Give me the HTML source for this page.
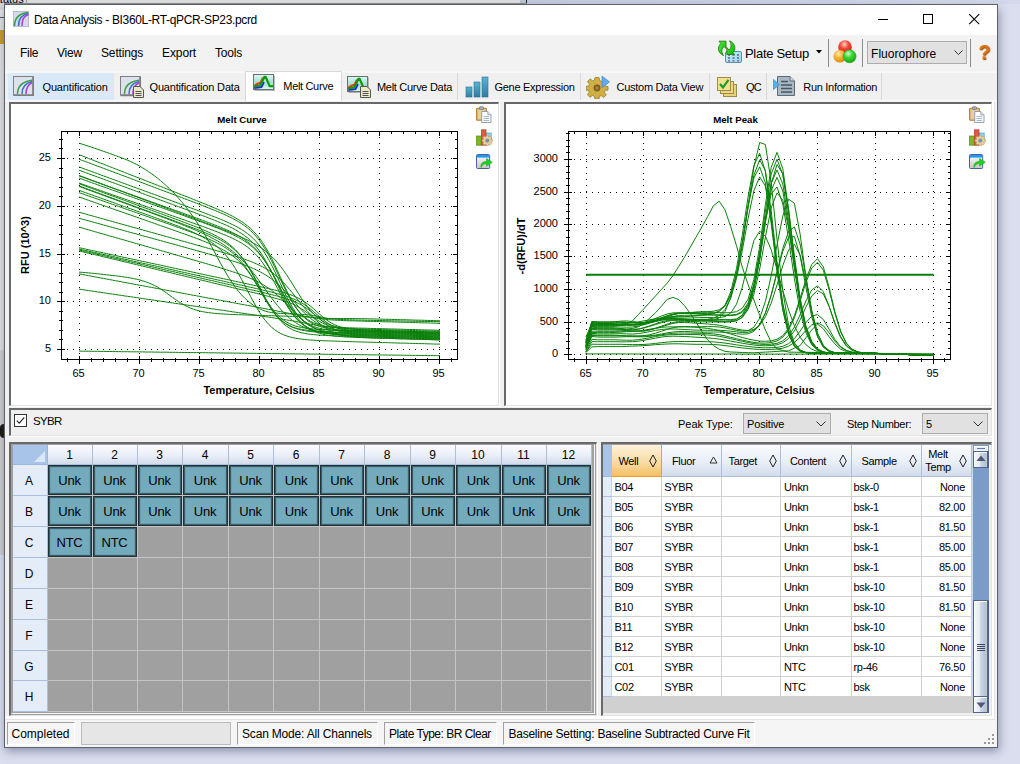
<!DOCTYPE html>
<html><head><meta charset="utf-8"><title>Data Analysis</title>
<style>
*{box-sizing:border-box;margin:0;padding:0}
html,body{width:1020px;height:764px;overflow:hidden}
body{position:relative;background:#dadeee;font-family:"Liberation Sans",sans-serif;font-size:12px;color:#000}
.a{position:absolute}
.t{position:absolute;white-space:pre;line-height:14px;height:14px}
#win{position:absolute;left:4px;top:4px;width:994px;height:744px;background:#f0f0f0;border:1px solid #5f6168;box-shadow:0 0 0 0 #000}
.sunk{position:absolute;border-style:solid;border-width:2px 1px 1px 2px;border-color:#696969 #e3e3e3 #e3e3e3 #696969;background:#fff}
.sunk:after{content:"";position:absolute;left:-2px;top:-2px;right:-2px;bottom:-2px;border-style:solid;border-width:0 1px 1px 0;border-color:#fff}
.tab{position:absolute;top:73px;height:27px;background:#f0f0f0;border-right:1px solid #dadada}
.tabt{position:absolute;font-size:11px;top:80.3px;line-height:14px;white-space:pre;letter-spacing:-0.15px}
.combo{position:absolute;background:#e1e1e1;border:1px solid #adadad}
.sb{position:absolute;top:722px;height:23px;border-style:solid;border-width:1px;border-color:#a0a0a0 #fff #fff #a0a0a0}
.sbt{position:absolute;top:727px;font-size:12px;line-height:14px;white-space:pre}
</style></head><body>

<!-- desktop background strips -->
<div class="a" style="left:0;top:0;width:520px;height:4px;background:#dedede"></div>
<div class="a" style="left:520px;top:0;width:6px;height:4px;background:#b7c6d8"></div>
<div class="a" style="left:526px;top:0;width:1px;height:4px;background:#222"></div>
<div class="a" style="left:527px;top:0;width:493px;height:4px;background:linear-gradient(90deg,#c4c9de,#d4d8ea)"></div>
<div class="a" style="left:0;top:3px;width:527px;height:1px;background:#8a8a8a"></div>
<div class="a" style="left:0;top:0;width:4px;height:555px;background:#e2e2e2"></div>
<div class="a" style="left:0;top:0;width:4px;height:10px;background:#d4d4d4"></div>
<div class="a" style="left:0;top:17px;width:4px;height:1px;background:#555"></div>
<div class="a" style="left:0;top:30px;width:4px;height:14px;background:#c79a1e"></div>
<div class="a" style="left:0;top:350px;width:4px;height:205px;background:#cfcfcf"></div>
<div class="a" style="left:0;top:424px;width:4px;height:14px;background:#151008;border-radius:4px 0 0 4px"></div>
<div class="t" style="left:-7.5px;top:-8px;font-size:11px;font-weight:400;color:#000">Status</div>
<div class="a" style="left:26px;top:0;width:1px;height:4px;background:#999"></div>
<!-- window shadow -->
<div class="a" style="left:10px;top:12px;width:982px;height:730px;box-shadow:1px 3px 9px 6px rgba(78,86,122,.58)"></div>
<div id="win"></div>
<!-- title bar -->
<div class="a" style="left:5px;top:5px;width:992px;height:30px;background:#fff"></div>
<svg class="a" style="left:13px;top:11px" width="16" height="16" viewBox="0 0 16 16"><rect x="0" y="0" width="16" height="16" fill="#d5daec" stroke="#9aa0b8" stroke-width="1"/><path d="M1.5 15 C1.5 7 6 2.5 15 1.5" fill="none" stroke="#3aa040" stroke-width="1.6"/><path d="M5.5 15 C5.5 8 9 3.5 15.5 2.5" fill="none" stroke="#3a6fd8" stroke-width="1.6"/><path d="M9 15 C9 9 11.5 4.5 15.5 3.5" fill="none" stroke="#b03ad0" stroke-width="1.6"/></svg>
<div class="t" style="left:34px;top:13px;font-size:12px;letter-spacing:-0.34px">Data Analysis - BI360L-RT-qPCR-SP23.pcrd</div>
<div class="a" style="left:878px;top:19px;width:10px;height:1px;background:#000"></div>
<div class="a" style="left:923px;top:14px;width:10px;height:10px;border:1px solid #000"></div>
<svg class="a" style="left:967px;top:12px" width="14" height="14" viewBox="0 0 14 14"><path d="M2.2 2.2 L12.2 12.2 M12.2 2.2 L2.2 12.2" stroke="#000" stroke-width="1.05" fill="none"/></svg>
<!-- menu bar -->
<div class="a" style="left:5px;top:35px;width:992px;height:36px;background:#f2f2f2"></div>
<div class="t" style="left:20px;top:46px;letter-spacing:-0.3px">File</div>
<div class="t" style="left:57px;top:46px;letter-spacing:-0.2px">View</div>
<div class="t" style="left:101px;top:46px;letter-spacing:-0.15px">Settings</div>
<div class="t" style="left:162px;top:46px;letter-spacing:-0.1px">Export</div>
<div class="t" style="left:215px;top:46px;letter-spacing:-0.2px">Tools</div>
<div class="t" style="left:745px;top:47px;font-size:13px;letter-spacing:-0.3px">Plate Setup</div>
<svg class="a" style="left:816px;top:50px" width="6" height="4"><path d="M0 0 L6 0 L3 3.5 Z" fill="#000"/></svg>
<div class="a" style="left:828px;top:39px;width:1px;height:28px;background:#8a8a8a"></div>
<div class="a" style="left:862px;top:39px;width:1px;height:28px;background:#8a8a8a"></div>
<div class="combo" style="left:867px;top:41px;width:100px;height:23px"></div>
<div class="t" style="left:871px;top:46.5px;font-size:12px;letter-spacing:0.05px">Fluorophore</div>
<svg class="a" style="left:953.5px;top:50px" width="10" height="6"><path d="M0.5 0.5 L4.5 4.5 L8.5 0.5" fill="none" stroke="#333" stroke-width="1"/></svg>
<div class="a" style="left:970px;top:39px;width:1px;height:28px;background:#8a8a8a"></div>
<div class="t" style="left:978.5px;top:40.5px;font-size:20px;font-weight:700;color:#d9761a;line-height:22px;height:22px;text-shadow:0.5px 1px 1px #8a3c00">?</div>

<!-- plate setup icon -->
<svg class="a" style="left:717px;top:40px" width="26" height="24" viewBox="0 0 26 24"><defs><linearGradient id="gp" x1="0" y1="0" x2="1" y2="1"><stop offset="0" stop-color="#b6f0f6"/><stop offset="1" stop-color="#9adbe8"/></linearGradient><linearGradient id="gg" x1="0" y1="0" x2="1" y2="1"><stop offset="0" stop-color="#6de860"/><stop offset=".5" stop-color="#22d81c"/><stop offset="1" stop-color="#0eae0a"/></linearGradient></defs><rect x="8.5" y="11.5" width="16" height="11" rx="1.5" fill="url(#gp)" stroke="#5e8ea8" stroke-width="1"/><g fill="#7f7aa6"><rect x="11" y="14" width="2" height="2"/><rect x="15.5" y="14" width="2" height="2"/><rect x="20" y="14" width="2" height="2"/><rect x="11" y="17" width="2" height="2"/><rect x="15.5" y="17" width="2" height="2"/><rect x="20" y="17" width="2" height="2"/><rect x="11" y="20" width="2" height="1.6"/><rect x="15.5" y="20" width="2" height="1.6"/><rect x="20" y="20" width="2" height="1.6"/></g><path d="M2 1.2H9V8.5L7 6.5C4.5 8.5 4 12 6.5 15.5C1.5 13.5 -0.5 8 3.8 3.5Z" fill="url(#gg)" stroke="#2d7a10" stroke-width=".9"/><path d="M12.5 0.8C18 3 19.5 9 16 12.5L17.5 14.5H9.8V7.5L12 10C14.5 8 14.8 4.5 12.5 0.8Z" fill="url(#gg)" stroke="#2d7a10" stroke-width=".9"/></svg>
<!-- colour balls -->
<svg class="a" style="left:832px;top:38px" width="28" height="28" viewBox="0 0 28 28"><defs><radialGradient id="rr" cx=".45" cy=".3" r=".7"><stop offset="0" stop-color="#ffd0c8"/><stop offset=".45" stop-color="#f24a3a"/><stop offset="1" stop-color="#d81810"/></radialGradient><radialGradient id="ro" cx=".4" cy=".3" r=".7"><stop offset="0" stop-color="#ffe9b0"/><stop offset=".5" stop-color="#f4b030"/><stop offset="1" stop-color="#e08a10"/></radialGradient><radialGradient id="rg" cx=".4" cy=".3" r=".7"><stop offset="0" stop-color="#d8f8d0"/><stop offset=".45" stop-color="#38d830"/><stop offset="1" stop-color="#14a812"/></radialGradient></defs><circle cx="13" cy="9" r="6.8" fill="url(#rr)"/><circle cx="7.8" cy="18.3" r="6.3" fill="url(#ro)"/><circle cx="17.6" cy="18.3" r="6.5" fill="url(#rg)" stroke="#2a9a28" stroke-width=".5"/></svg>

<!-- tab strip -->
<svg class="a" width="0" height="0"><defs><linearGradient id="mint" x1="0" y1="0" x2="0" y2="1"><stop offset="0" stop-color="#d4fbf6"/><stop offset=".55" stop-color="#a6ddd2"/><stop offset="1" stop-color="#d2fff8"/></linearGradient></defs></svg>
<div class="a" style="left:5px;top:71px;width:992px;height:31px;background:#f0f0f0"></div>
<div class="a" style="left:5px;top:71px;width:992px;height:2px;background:#f7f7f7"></div>
<div class="a" style="left:8px;top:73px;width:874px;height:1px;background:#e0e0e0"></div>
<div class="tab" style="left:8px;width:106px;background:#d9e9f8;border-right:1px solid #e4e4e4"></div>
<div class="tab" style="left:114px;width:132px"></div>
<div class="tab" style="left:342px;width:116px"></div>
<div class="tab" style="left:458px;width:123px"></div>
<div class="tab" style="left:581px;width:129px"></div>
<div class="tab" style="left:710px;width:57px"></div>
<div class="tab" style="left:767px;width:115px"></div>
<div class="a" style="left:5px;top:100px;width:992px;height:1px;background:#fafafa"></div>
<div class="a" style="left:245px;top:71px;width:97px;height:30px;background:#fff;border:1px solid #d9d9d9;border-bottom:none"></div>
<!-- icon: quantification -->
<svg class="a" style="left:13px;top:76px" width="21" height="20" viewBox="0 0 21 20"><rect x="0.5" y="0.5" width="19.5" height="18.5" fill="#dde1ee" stroke="#808080"/><path d="M0.5 19.4H20.8M20.2 0.5V20" stroke="#7c7c7c" stroke-width="1.7" fill="none"/><path d="M4.5 18 C4.5 10 9 5.5 19 4.2" fill="none" stroke="#3aa040" stroke-width="1.5"/><path d="M9 18 C9 11.5 12 7 19 5.5" fill="none" stroke="#3a6fd8" stroke-width="1.5"/><path d="M13 18 C13 12.5 15 8.5 19.2 6.8" fill="none" stroke="#b03ad0" stroke-width="1.5"/></svg>
<div class="tabt" style="left:42.5px">Quantification</div>
<!-- icon: quantification data -->
<svg class="a" style="left:120px;top:76px" width="24" height="22" viewBox="0 0 24 22"><rect x="0.5" y="0.5" width="19.5" height="18.5" fill="#dde1ee" stroke="#808080"/><path d="M0.5 19.4H20.8M20.2 0.5V20" stroke="#7c7c7c" stroke-width="1.7" fill="none"/><path d="M4.5 18 C4.5 10 9 5.5 19 4.2" fill="none" stroke="#3aa040" stroke-width="1.5"/><path d="M9 18 C9 11.5 12 7 19 5.5" fill="none" stroke="#3a6fd8" stroke-width="1.5"/><path d="M13 18 C13 12.5 15 8.5 19.2 6.8" fill="none" stroke="#b03ad0" stroke-width="1.5"/><path d="M13.5 10.5H20L23.5 14V21.5H13.5Z" fill="#ece9c8" stroke="#555" stroke-width="1"/><path d="M15.5 15.5H21.5M15.5 17.5H21.5M15.5 19.5H21.5" stroke="#555" stroke-width="1"/></svg>
<div class="tabt" style="left:149.5px;letter-spacing:-0.18px">Quantification Data</div>
<!-- icon: melt curve (selected) -->
<svg class="a" style="left:253px;top:74px" width="22" height="17" viewBox="0 0 22 17"><rect x="0.5" y="0.5" width="20" height="15" fill="url(#mint)" stroke="#6e6e6e"/><path d="M1.5 16.4H21.6M21.3 1.5V16.6" stroke="#8a8a8a" stroke-width="1" fill="none" opacity=".7"/><path d="M1.2 14 L5 13.6 L8.4 13 L9.8 10.4 L10.8 8" fill="none" stroke="#1a28e0" stroke-width="2"/><path d="M1 12 L4 10 L7.5 8.6 L9 5.6 L9.9 3.8" fill="none" stroke="#f03410" stroke-width="2"/><path d="M1 12.6 L7.4 11.2 L9.8 6.2 L11.4 2.8 L12.6 2.8 L14.2 6.4 L16.6 12.2 L20 12.2" fill="none" stroke="#12980c" stroke-width="2.2" stroke-linejoin="round"/></svg>
<div class="tabt" style="left:283.3px;top:79px;letter-spacing:-0.33px">Melt Curve</div>
<!-- icon: melt curve data -->
<svg class="a" style="left:347px;top:76px" width="24" height="22" viewBox="0 0 24 22"><rect x="0.5" y="0.5" width="20" height="15" fill="url(#mint)" stroke="#6e6e6e"/><path d="M1.5 16.4H21.6M21.3 1.5V16.6" stroke="#8a8a8a" stroke-width="1" fill="none" opacity=".7"/><path d="M1.2 14 L5 13.6 L8.4 13 L9.8 10.4 L10.8 8" fill="none" stroke="#1a28e0" stroke-width="2"/><path d="M1 12 L4 10 L7.5 8.6 L9 5.6 L9.9 3.8" fill="none" stroke="#f03410" stroke-width="2"/><path d="M1 12.6 L7.4 11.2 L9.8 6.2 L11.4 2.8 L12.6 2.8 L14.2 6.4 L16.6 12.2 L20 12.2" fill="none" stroke="#12980c" stroke-width="2.2" stroke-linejoin="round"/><path d="M13.5 10.5H20L23.5 14V21.5H13.5Z" fill="#ece9c8" stroke="#555" stroke-width="1"/><path d="M15.5 15.5H21.5M15.5 17.5H21.5M15.5 19.5H21.5" stroke="#555" stroke-width="1"/></svg>
<div class="tabt" style="left:377px;letter-spacing:-0.3px">Melt Curve Data</div>
<!-- icon: gene expression bars -->
<svg class="a" style="left:465px;top:76px" width="24" height="22" viewBox="0 0 24 22"><defs><linearGradient id="gb" x1="0" y1="0" x2="0" y2="1"><stop offset="0" stop-color="#57b4d6"/><stop offset="1" stop-color="#2b7ea6"/></linearGradient></defs><rect x="1" y="11" width="6" height="10" fill="url(#gb)" stroke="#2a6f94" stroke-width=".6"/><rect x="9" y="6" width="6" height="15" fill="url(#gb)" stroke="#2a6f94" stroke-width=".6"/><rect x="17" y="1" width="6" height="20" fill="url(#gb)" stroke="#2a6f94" stroke-width=".6"/></svg>
<div class="tabt" style="left:494.5px;letter-spacing:-0.28px">Gene Expression</div>
<!-- icon: gear -->
<svg class="a" style="left:586px;top:75px" width="24" height="24" viewBox="0 0 24 24"><g transform="translate(11,13)"><path d="M-2 -10.5H2L2.6 -7.6L5 -6.4L7.4 -8L10 -5.2L8 -2.8L8.6 -1.6H11V2.2H8.4L7.4 4.4L9.4 6.8L6.6 9.6L4.2 7.6L2.4 8.4L2 11H-2L-2.6 8.4L-4.6 7.4L-7 9.4L-9.6 6.6L-7.8 4.2L-8.6 2.2H-11V-1.8H-8.4L-7.6 -4L-9.6 -6.4L-6.8 -9.2L-4.4 -7.2L-2.6 -8Z" fill="#cfae45" stroke="#9c7f24" stroke-width=".8"/><circle r="3.4" fill="#7a5a1a"/><circle r="2" fill="#a08040"/></g><path d="M16 1L23.5 7L16 12.5Z" fill="#62acec" stroke="#3d86cc" stroke-width=".7"/></svg>
<div class="tabt" style="left:616.5px;letter-spacing:-0.27px">Custom Data View</div>
<!-- icon: QC -->
<svg class="a" style="left:716px;top:77px" width="22" height="20" viewBox="0 0 22 20"><rect x="7.5" y="7.5" width="13" height="12" fill="#e8d27a" stroke="#9b8a4a"/><rect x="4.5" y="4.5" width="13" height="12" fill="#ecd884" stroke="#9b8a4a"/><rect x="1.5" y="0.5" width="13" height="13" fill="#f2e08c" stroke="#9b8a4a"/><path d="M4 7L7 10.5L12.5 2.8" fill="none" stroke="#1f9c2c" stroke-width="2.2"/></svg>
<div class="tabt" style="left:746px;letter-spacing:-0.7px">QC</div>
<!-- icon: run info -->
<svg class="a" style="left:773px;top:75px" width="23" height="22" viewBox="0 0 23 22"><path d="M4.5 1.5H17L21.5 6V20.5H4.5Z" fill="#a9b8c4" stroke="#5c6a74"/><path d="M17 1.5V6H21.5" fill="#d5dde2" stroke="#5c6a74"/><path d="M8 6.5H15M8 10H19M8 13.5H19M8 17H19" stroke="#4a565e" stroke-width="1.4"/><path d="M0.5 4.5L6.5 9.5L0.5 14.5Z" fill="#5aaef0" stroke="#3a86cc" stroke-width=".7"/></svg>
<div class="tabt" style="left:803.3px;letter-spacing:-0.3px">Run Information</div>

<div class="a" style="left:5px;top:101px;width:990px;height:619px;background:#fff;border-right:1px solid #e3e3e3;border-bottom:1px solid #e3e3e3"></div>
<div class="a" style="left:5px;top:101px;width:987px;height:615px;background:#f0f0f0"></div>
<div class="sunk" style="left:9px;top:102px;width:490px;height:304px"></div>
<div class="sunk" style="left:504px;top:102px;width:488px;height:304px"></div>
<div class="sunk" style="left:9px;top:408px;width:983px;height:28px;background:#f0f0f0"></div>
<svg class="a" style="left:0;top:0" width="1020" height="764" viewBox="0 0 1020 764"><defs><clipPath id="clipL"><rect x="62" y="132" width="395" height="227"/></clipPath><clipPath id="clipR"><rect x="569" y="132" width="381" height="227"/></clipPath></defs><line x1="79.5" y1="131" x2="79.5" y2="359" stroke="#000" stroke-width="1" stroke-dasharray="1 5" stroke-dashoffset="-6" shape-rendering="crispEdges"/><line x1="139.5" y1="131" x2="139.5" y2="359" stroke="#000" stroke-width="1" stroke-dasharray="1 5" stroke-dashoffset="-6" shape-rendering="crispEdges"/><line x1="199.5" y1="131" x2="199.5" y2="359" stroke="#000" stroke-width="1" stroke-dasharray="1 5" stroke-dashoffset="-6" shape-rendering="crispEdges"/><line x1="259.5" y1="131" x2="259.5" y2="359" stroke="#000" stroke-width="1" stroke-dasharray="1 5" stroke-dashoffset="-6" shape-rendering="crispEdges"/><line x1="319.5" y1="131" x2="319.5" y2="359" stroke="#000" stroke-width="1" stroke-dasharray="1 5" stroke-dashoffset="-6" shape-rendering="crispEdges"/><line x1="379.5" y1="131" x2="379.5" y2="359" stroke="#000" stroke-width="1" stroke-dasharray="1 5" stroke-dashoffset="-6" shape-rendering="crispEdges"/><line x1="439.5" y1="131" x2="439.5" y2="359" stroke="#000" stroke-width="1" stroke-dasharray="1 5" stroke-dashoffset="-6" shape-rendering="crispEdges"/><line x1="61" y1="349.5" x2="457" y2="349.5" stroke="#000" stroke-width="1" stroke-dasharray="1 5" stroke-dashoffset="-6" shape-rendering="crispEdges"/><line x1="61" y1="301.5" x2="457" y2="301.5" stroke="#000" stroke-width="1" stroke-dasharray="1 5" stroke-dashoffset="-6" shape-rendering="crispEdges"/><line x1="61" y1="254.5" x2="457" y2="254.5" stroke="#000" stroke-width="1" stroke-dasharray="1 5" stroke-dashoffset="-6" shape-rendering="crispEdges"/><line x1="61" y1="206.5" x2="457" y2="206.5" stroke="#000" stroke-width="1" stroke-dasharray="1 5" stroke-dashoffset="-6" shape-rendering="crispEdges"/><line x1="61" y1="158.5" x2="457" y2="158.5" stroke="#000" stroke-width="1" stroke-dasharray="1 5" stroke-dashoffset="-6" shape-rendering="crispEdges"/><g clip-path="url(#clipL)"><polyline points="79.5,154.9 82.5,156.0 85.5,157.2 88.5,158.4 91.5,159.5 94.5,160.7 97.5,161.9 100.5,163.1 103.5,164.2 106.5,165.4 109.5,166.6 112.5,167.7 115.5,168.9 118.5,170.1 121.5,171.2 124.5,172.4 127.5,173.6 130.5,174.8 133.5,175.9 136.5,177.1 139.5,178.3 142.5,179.4 145.5,180.6 148.5,181.8 151.5,182.9 154.5,184.1 157.5,185.3 160.5,186.5 163.5,187.6 166.5,188.8 169.5,190.0 172.5,191.1 175.5,192.3 178.5,193.5 181.5,194.7 184.5,195.8 187.5,197.0 190.5,198.2 193.5,199.4 196.5,200.6 199.5,201.8 202.5,203.0 205.5,204.2 208.5,205.4 211.5,206.7 214.5,207.9 217.5,209.2 220.5,210.5 223.5,211.8 226.5,213.2 229.5,214.7 232.5,216.2 235.5,217.9 238.5,219.6 241.5,221.5 244.5,223.6 247.5,225.9 250.5,228.4 253.5,231.3 256.5,234.6 259.5,238.3 262.5,242.5 265.5,247.2 268.5,252.4 271.5,258.1 274.5,264.3 277.5,270.8 280.5,277.4 283.5,284.0 286.5,290.4 289.5,296.4 292.5,301.9 295.5,306.8 298.5,311.1 301.5,314.7 304.5,317.8 307.5,320.3 310.5,322.3 313.5,324.0 316.5,325.3 319.5,326.4 322.5,327.3 325.5,327.9 328.5,328.5 331.5,328.9 334.5,329.3 337.5,329.6 340.5,329.9 343.5,330.1 346.5,330.3 349.5,330.4 352.5,330.6 355.5,330.7 358.5,330.8 361.5,330.9 364.5,331.0 367.5,331.1 370.5,331.2 373.5,331.3 376.5,331.4 379.5,331.5 382.5,331.6 385.5,331.7 388.5,331.7 391.5,331.8 394.5,331.9 397.5,332.0 400.5,332.1 403.5,332.2 406.5,332.2 409.5,332.3 412.5,332.4 415.5,332.5 418.5,332.6 421.5,332.7 424.5,332.7 427.5,332.8 430.5,332.9 433.5,333.0 436.5,333.1 439.5,333.2" fill="none" stroke="#0a800a" stroke-width="1.0" stroke-linejoin="round" stroke-linecap="square" opacity="1.0"/><polyline points="79.5,159.4 82.5,160.5 85.5,161.6 88.5,162.7 91.5,163.8 94.5,165.0 97.5,166.1 100.5,167.2 103.5,168.3 106.5,169.5 109.5,170.6 112.5,171.7 115.5,172.8 118.5,173.9 121.5,175.1 124.5,176.2 127.5,177.3 130.5,178.4 133.5,179.6 136.5,180.7 139.5,181.8 142.5,182.9 145.5,184.0 148.5,185.2 151.5,186.3 154.5,187.4 157.5,188.5 160.5,189.7 163.5,190.8 166.5,191.9 169.5,193.0 172.5,194.2 175.5,195.3 178.5,196.4 181.5,197.5 184.5,198.7 187.5,199.8 190.5,200.9 193.5,202.1 196.5,203.2 199.5,204.4 202.5,205.5 205.5,206.7 208.5,207.9 211.5,209.1 214.5,210.3 217.5,211.5 220.5,212.8 223.5,214.1 226.5,215.5 229.5,216.9 232.5,218.4 235.5,220.0 238.5,221.7 241.5,223.6 244.5,225.7 247.5,228.0 250.5,230.6 253.5,233.5 256.5,236.9 259.5,240.6 262.5,244.9 265.5,249.6 268.5,254.9 271.5,260.6 274.5,266.7 277.5,273.1 280.5,279.5 283.5,285.9 286.5,291.9 289.5,297.6 292.5,302.7 295.5,307.2 298.5,311.1 301.5,314.4 304.5,317.2 307.5,319.4 310.5,321.3 313.5,322.8 316.5,323.9 319.5,324.9 322.5,325.7 325.5,326.3 328.5,326.8 331.5,327.2 334.5,327.5 337.5,327.8 340.5,328.0 343.5,328.2 346.5,328.4 349.5,328.5 352.5,328.7 355.5,328.8 358.5,328.9 361.5,329.0 364.5,329.1 367.5,329.2 370.5,329.3 373.5,329.4 376.5,329.5 379.5,329.6 382.5,329.7 385.5,329.7 388.5,329.8 391.5,329.9 394.5,330.0 397.5,330.1 400.5,330.2 403.5,330.3 406.5,330.3 409.5,330.4 412.5,330.5 415.5,330.6 418.5,330.7 421.5,330.8 424.5,330.8 427.5,330.9 430.5,331.0 433.5,331.1 436.5,331.2 439.5,331.3" fill="none" stroke="#0a800a" stroke-width="1.0" stroke-linejoin="round" stroke-linecap="square" opacity="1.0"/><polyline points="79.5,167.1 82.5,168.2 85.5,169.3 88.5,170.4 91.5,171.5 94.5,172.6 97.5,173.7 100.5,174.8 103.5,175.9 106.5,177.0 109.5,178.1 112.5,179.2 115.5,180.3 118.5,181.4 121.5,182.5 124.5,183.6 127.5,184.7 130.5,185.8 133.5,186.9 136.5,188.0 139.5,189.1 142.5,190.2 145.5,191.3 148.5,192.4 151.5,193.5 154.5,194.5 157.5,195.6 160.5,196.7 163.5,197.8 166.5,198.9 169.5,200.0 172.5,201.1 175.5,202.2 178.5,203.3 181.5,204.5 184.5,205.6 187.5,206.7 190.5,207.8 193.5,208.9 196.5,210.0 199.5,211.1 202.5,212.2 205.5,213.4 208.5,214.5 211.5,215.7 214.5,216.8 217.5,218.0 220.5,219.3 223.5,220.5 226.5,221.8 229.5,223.2 232.5,224.6 235.5,226.1 238.5,227.7 241.5,229.5 244.5,231.4 247.5,233.6 250.5,236.0 253.5,238.8 256.5,241.9 259.5,245.4 262.5,249.5 265.5,254.1 268.5,259.2 271.5,264.8 274.5,270.9 277.5,277.3 280.5,283.8 283.5,290.2 286.5,296.4 289.5,302.2 292.5,307.5 295.5,312.1 298.5,316.1 301.5,319.4 304.5,322.2 307.5,324.5 310.5,326.3 313.5,327.8 316.5,328.9 319.5,329.9 322.5,330.6 325.5,331.2 328.5,331.7 331.5,332.1 334.5,332.4 337.5,332.6 340.5,332.8 343.5,333.0 346.5,333.2 349.5,333.3 352.5,333.5 355.5,333.6 358.5,333.7 361.5,333.8 364.5,333.9 367.5,334.0 370.5,334.1 373.5,334.2 376.5,334.3 379.5,334.3 382.5,334.4 385.5,334.5 388.5,334.6 391.5,334.7 394.5,334.8 397.5,334.9 400.5,334.9 403.5,335.0 406.5,335.1 409.5,335.2 412.5,335.3 415.5,335.4 418.5,335.4 421.5,335.5 424.5,335.6 427.5,335.7 430.5,335.8 433.5,335.9 436.5,335.9 439.5,336.0" fill="none" stroke="#0a800a" stroke-width="1.0" stroke-linejoin="round" stroke-linecap="square" opacity="1.0"/><polyline points="79.5,170.4 82.5,171.5 85.5,172.6 88.5,173.7 91.5,174.8 94.5,175.9 97.5,177.0 100.5,178.1 103.5,179.2 106.5,180.3 109.5,181.4 112.5,182.5 115.5,183.6 118.5,184.7 121.5,185.8 124.5,186.9 127.5,188.0 130.5,189.1 133.5,190.2 136.5,191.3 139.5,192.4 142.5,193.5 145.5,194.6 148.5,195.7 151.5,196.8 154.5,197.9 157.5,199.0 160.5,200.1 163.5,201.2 166.5,202.3 169.5,203.4 172.5,204.5 175.5,205.6 178.5,206.7 181.5,207.8 184.5,208.9 187.5,210.0 190.5,211.1 193.5,212.2 196.5,213.4 199.5,214.5 202.5,215.6 205.5,216.7 208.5,217.9 211.5,219.1 214.5,220.3 217.5,221.5 220.5,222.7 223.5,224.0 226.5,225.3 229.5,226.7 232.5,228.2 235.5,229.8 238.5,231.6 241.5,233.5 244.5,235.6 247.5,237.9 250.5,240.6 253.5,243.6 256.5,247.1 259.5,251.0 262.5,255.5 265.5,260.4 268.5,265.9 271.5,271.9 274.5,278.2 277.5,284.6 280.5,291.1 283.5,297.3 286.5,303.2 289.5,308.5 292.5,313.2 295.5,317.3 298.5,320.8 301.5,323.6 304.5,326.0 307.5,327.9 310.5,329.4 313.5,330.6 316.5,331.6 319.5,332.3 322.5,333.0 325.5,333.4 328.5,333.8 331.5,334.2 334.5,334.4 337.5,334.7 340.5,334.8 343.5,335.0 346.5,335.2 349.5,335.3 352.5,335.4 355.5,335.5 358.5,335.6 361.5,335.7 364.5,335.8 367.5,335.9 370.5,336.0 373.5,336.1 376.5,336.2 379.5,336.3 382.5,336.3 385.5,336.4 388.5,336.5 391.5,336.6 394.5,336.7 397.5,336.8 400.5,336.9 403.5,336.9 406.5,337.0 409.5,337.1 412.5,337.2 415.5,337.3 418.5,337.4 421.5,337.4 424.5,337.5 427.5,337.6 430.5,337.7 433.5,337.8 436.5,337.9 439.5,337.9" fill="none" stroke="#0a800a" stroke-width="1.0" stroke-linejoin="round" stroke-linecap="square" opacity="1.0"/><polyline points="79.5,176.1 82.5,177.1 85.5,178.2 88.5,179.3 91.5,180.4 94.5,181.4 97.5,182.5 100.5,183.6 103.5,184.7 106.5,185.7 109.5,186.8 112.5,187.9 115.5,189.0 118.5,190.0 121.5,191.1 124.5,192.2 127.5,193.3 130.5,194.3 133.5,195.4 136.5,196.5 139.5,197.6 142.5,198.6 145.5,199.7 148.5,200.8 151.5,201.9 154.5,202.9 157.5,204.0 160.5,205.1 163.5,206.2 166.5,207.2 169.5,208.3 172.5,209.4 175.5,210.5 178.5,211.5 181.5,212.6 184.5,213.7 187.5,214.8 190.5,215.9 193.5,217.0 196.5,218.1 199.5,219.2 202.5,220.3 205.5,221.4 208.5,222.5 211.5,223.7 214.5,224.8 217.5,226.0 220.5,227.2 223.5,228.5 226.5,229.8 229.5,231.1 232.5,232.6 235.5,234.1 238.5,235.7 241.5,237.5 244.5,239.5 247.5,241.7 250.5,244.1 253.5,246.9 256.5,250.0 259.5,253.5 262.5,257.4 265.5,261.8 268.5,266.6 271.5,271.9 274.5,277.4 277.5,283.1 280.5,288.9 283.5,294.5 286.5,299.9 289.5,304.8 292.5,309.3 295.5,313.2 298.5,316.5 301.5,319.3 304.5,321.7 307.5,323.6 310.5,325.2 313.5,326.4 316.5,327.5 319.5,328.3 322.5,328.9 325.5,329.5 328.5,329.9 331.5,330.2 334.5,330.5 337.5,330.8 340.5,331.0 343.5,331.1 346.5,331.3 349.5,331.4 352.5,331.6 355.5,331.7 358.5,331.8 361.5,331.9 364.5,332.0 367.5,332.1 370.5,332.2 373.5,332.3 376.5,332.3 379.5,332.4 382.5,332.5 385.5,332.6 388.5,332.7 391.5,332.8 394.5,332.9 397.5,332.9 400.5,333.0 403.5,333.1 406.5,333.2 409.5,333.3 412.5,333.4 415.5,333.5 418.5,333.5 421.5,333.6 424.5,333.7 427.5,333.8 430.5,333.9 433.5,334.0 436.5,334.0 439.5,334.1" fill="none" stroke="#0a800a" stroke-width="1.0" stroke-linejoin="round" stroke-linecap="square" opacity="1.0"/><polyline points="79.5,178.3 82.5,179.3 85.5,180.4 88.5,181.5 91.5,182.6 94.5,183.6 97.5,184.7 100.5,185.8 103.5,186.9 106.5,187.9 109.5,189.0 112.5,190.1 115.5,191.2 118.5,192.2 121.5,193.3 124.5,194.4 127.5,195.5 130.5,196.5 133.5,197.6 136.5,198.7 139.5,199.8 142.5,200.8 145.5,201.9 148.5,203.0 151.5,204.1 154.5,205.1 157.5,206.2 160.5,207.3 163.5,208.4 166.5,209.4 169.5,210.5 172.5,211.6 175.5,212.7 178.5,213.7 181.5,214.8 184.5,215.9 187.5,217.0 190.5,218.1 193.5,219.2 196.5,220.2 199.5,221.3 202.5,222.4 205.5,223.6 208.5,224.7 211.5,225.8 214.5,227.0 217.5,228.1 220.5,229.3 223.5,230.5 226.5,231.8 229.5,233.1 232.5,234.5 235.5,236.0 238.5,237.5 241.5,239.2 244.5,241.1 247.5,243.1 250.5,245.4 253.5,247.9 256.5,250.8 259.5,254.0 262.5,257.7 265.5,261.8 268.5,266.4 271.5,271.5 274.5,276.9 277.5,282.6 280.5,288.6 283.5,294.5 286.5,300.2 289.5,305.7 292.5,310.7 295.5,315.2 298.5,319.1 301.5,322.4 304.5,325.3 307.5,327.6 310.5,329.5 313.5,331.1 316.5,332.3 319.5,333.3 322.5,334.1 325.5,334.8 328.5,335.3 331.5,335.7 334.5,336.1 337.5,336.3 340.5,336.6 343.5,336.8 346.5,337.0 349.5,337.1 352.5,337.2 355.5,337.4 358.5,337.5 361.5,337.6 364.5,337.7 367.5,337.8 370.5,337.9 373.5,338.0 376.5,338.1 379.5,338.2 382.5,338.3 385.5,338.3 388.5,338.4 391.5,338.5 394.5,338.6 397.5,338.7 400.5,338.8 403.5,338.8 406.5,338.9 409.5,339.0 412.5,339.1 415.5,339.2 418.5,339.3 421.5,339.3 424.5,339.4 427.5,339.5 430.5,339.6 433.5,339.7 436.5,339.8 439.5,339.8" fill="none" stroke="#0a800a" stroke-width="1.0" stroke-linejoin="round" stroke-linecap="square" opacity="1.0"/><polyline points="79.5,183.2 82.5,184.3 85.5,185.3 88.5,186.4 91.5,187.4 94.5,188.5 97.5,189.5 100.5,190.6 103.5,191.6 106.5,192.7 109.5,193.7 112.5,194.8 115.5,195.8 118.5,196.9 121.5,197.9 124.5,199.0 127.5,200.0 130.5,201.1 133.5,202.1 136.5,203.2 139.5,204.2 142.5,205.3 145.5,206.3 148.5,207.4 151.5,208.4 154.5,209.5 157.5,210.5 160.5,211.6 163.5,212.6 166.5,213.7 169.5,214.8 172.5,215.8 175.5,216.9 178.5,217.9 181.5,219.0 184.5,220.0 187.5,221.1 190.5,222.1 193.5,223.2 196.5,224.3 199.5,225.3 202.5,226.4 205.5,227.5 208.5,228.6 211.5,229.7 214.5,230.8 217.5,232.0 220.5,233.2 223.5,234.4 226.5,235.6 229.5,236.9 232.5,238.3 235.5,239.8 238.5,241.4 241.5,243.1 244.5,245.0 247.5,247.1 250.5,249.5 253.5,252.2 256.5,255.3 259.5,258.7 262.5,262.6 265.5,267.0 268.5,271.9 271.5,277.1 274.5,282.6 277.5,288.4 280.5,294.1 283.5,299.7 286.5,305.0 289.5,309.8 292.5,314.1 295.5,317.8 298.5,320.9 301.5,323.5 304.5,325.7 307.5,327.4 310.5,328.8 313.5,330.0 316.5,330.9 319.5,331.6 322.5,332.1 325.5,332.6 328.5,333.0 331.5,333.3 334.5,333.5 337.5,333.7 340.5,333.9 343.5,334.1 346.5,334.2 349.5,334.3 352.5,334.5 355.5,334.6 358.5,334.7 361.5,334.8 364.5,334.9 367.5,335.0 370.5,335.0 373.5,335.1 376.5,335.2 379.5,335.3 382.5,335.4 385.5,335.5 388.5,335.6 391.5,335.6 394.5,335.7 397.5,335.8 400.5,335.9 403.5,336.0 406.5,336.1 409.5,336.1 412.5,336.2 415.5,336.3 418.5,336.4 421.5,336.5 424.5,336.6 427.5,336.7 430.5,336.7 433.5,336.8 436.5,336.9 439.5,337.0" fill="none" stroke="#0a800a" stroke-width="1.0" stroke-linejoin="round" stroke-linecap="square" opacity="1.0"/><polyline points="79.5,183.9 82.5,185.0 85.5,186.1 88.5,187.2 91.5,188.3 94.5,189.4 97.5,190.5 100.5,191.6 103.5,192.7 106.5,193.8 109.5,194.9 112.5,196.0 115.5,197.1 118.5,198.2 121.5,199.3 124.5,200.4 127.5,201.5 130.5,202.6 133.5,203.7 136.5,204.8 139.5,205.9 142.5,207.0 145.5,208.1 148.5,209.2 151.5,210.3 154.5,211.4 157.5,212.5 160.5,213.6 163.5,214.7 166.5,215.8 169.5,216.9 172.5,218.0 175.5,219.1 178.5,220.2 181.5,221.3 184.5,222.5 187.5,223.6 190.5,224.8 193.5,225.9 196.5,227.1 199.5,228.3 202.5,229.6 205.5,230.8 208.5,232.2 211.5,233.6 214.5,235.0 217.5,236.6 220.5,238.3 223.5,240.1 226.5,242.2 229.5,244.5 232.5,247.0 235.5,249.9 238.5,253.2 241.5,256.9 244.5,261.1 247.5,265.7 250.5,270.8 253.5,276.3 256.5,282.0 259.5,287.8 262.5,293.6 265.5,299.1 268.5,304.3 271.5,308.9 274.5,313.0 277.5,316.6 280.5,319.5 283.5,322.0 286.5,324.0 289.5,325.6 292.5,326.9 295.5,327.9 298.5,328.7 301.5,329.4 304.5,329.9 307.5,330.3 310.5,330.7 313.5,330.9 316.5,331.2 319.5,331.4 322.5,331.5 325.5,331.7 328.5,331.8 331.5,331.9 334.5,332.1 337.5,332.2 340.5,332.3 343.5,332.4 346.5,332.5 349.5,332.5 352.5,332.6 355.5,332.7 358.5,332.8 361.5,332.9 364.5,333.0 367.5,333.1 370.5,333.1 373.5,333.2 376.5,333.3 379.5,333.4 382.5,333.5 385.5,333.6 388.5,333.7 391.5,333.7 394.5,333.8 397.5,333.9 400.5,334.0 403.5,334.1 406.5,334.2 409.5,334.2 412.5,334.3 415.5,334.4 418.5,334.5 421.5,334.6 424.5,334.7 427.5,334.7 430.5,334.8 433.5,334.9 436.5,335.0 439.5,335.1" fill="none" stroke="#0a800a" stroke-width="1.0" stroke-linejoin="round" stroke-linecap="square" opacity="1.0"/><polyline points="79.5,186.1 82.5,187.2 85.5,188.3 88.5,189.4 91.5,190.5 94.5,191.6 97.5,192.7 100.5,193.8 103.5,194.9 106.5,196.0 109.5,197.1 112.5,198.2 115.5,199.3 118.5,200.4 121.5,201.5 124.5,202.6 127.5,203.7 130.5,204.8 133.5,205.9 136.5,207.0 139.5,208.1 142.5,209.2 145.5,210.3 148.5,211.4 151.5,212.5 154.5,213.6 157.5,214.7 160.5,215.8 163.5,216.9 166.5,218.0 169.5,219.1 172.5,220.2 175.5,221.3 178.5,222.4 181.5,223.5 184.5,224.7 187.5,225.8 190.5,226.9 193.5,228.1 196.5,229.2 199.5,230.4 202.5,231.6 205.5,232.9 208.5,234.2 211.5,235.5 214.5,236.9 217.5,238.4 220.5,240.0 223.5,241.7 226.5,243.6 229.5,245.7 232.5,248.1 235.5,250.7 238.5,253.7 241.5,257.1 244.5,260.9 247.5,265.2 250.5,270.0 253.5,275.2 256.5,280.8 259.5,286.6 262.5,292.5 265.5,298.3 268.5,303.8 271.5,308.9 274.5,313.5 277.5,317.5 280.5,320.9 283.5,323.8 286.5,326.2 289.5,328.1 292.5,329.7 295.5,330.9 298.5,331.9 301.5,332.7 304.5,333.4 307.5,333.9 310.5,334.3 313.5,334.6 316.5,334.9 319.5,335.1 322.5,335.3 325.5,335.5 328.5,335.6 331.5,335.7 334.5,335.9 337.5,336.0 340.5,336.1 343.5,336.2 346.5,336.3 349.5,336.4 352.5,336.5 355.5,336.5 358.5,336.6 361.5,336.7 364.5,336.8 367.5,336.9 370.5,337.0 373.5,337.1 376.5,337.1 379.5,337.2 382.5,337.3 385.5,337.4 388.5,337.5 391.5,337.6 394.5,337.6 397.5,337.7 400.5,337.8 403.5,337.9 406.5,338.0 409.5,338.1 412.5,338.1 415.5,338.2 418.5,338.3 421.5,338.4 424.5,338.5 427.5,338.6 430.5,338.6 433.5,338.7 436.5,338.8 439.5,338.9" fill="none" stroke="#0a800a" stroke-width="1.0" stroke-linejoin="round" stroke-linecap="square" opacity="1.0"/><polyline points="79.5,190.5 82.5,191.6 85.5,192.6 88.5,193.7 91.5,194.8 94.5,195.9 97.5,196.9 100.5,198.0 103.5,199.1 106.5,200.2 109.5,201.2 112.5,202.3 115.5,203.4 118.5,204.5 121.5,205.5 124.5,206.6 127.5,207.7 130.5,208.8 133.5,209.8 136.5,210.9 139.5,212.0 142.5,213.1 145.5,214.2 148.5,215.2 151.5,216.3 154.5,217.4 157.5,218.5 160.5,219.6 163.5,220.7 166.5,221.8 169.5,222.9 172.5,224.0 175.5,225.2 178.5,226.3 181.5,227.5 184.5,228.7 187.5,229.9 190.5,231.2 193.5,232.5 196.5,233.9 199.5,235.4 202.5,236.9 205.5,238.6 208.5,240.4 211.5,242.4 214.5,244.5 217.5,247.0 220.5,249.7 223.5,252.7 226.5,256.1 229.5,259.9 232.5,264.1 235.5,268.7 238.5,273.8 241.5,279.2 244.5,284.8 247.5,290.6 250.5,296.3 253.5,302.0 256.5,307.3 259.5,312.3 262.5,316.8 265.5,320.7 268.5,324.2 271.5,327.1 274.5,329.6 277.5,331.7 280.5,333.4 283.5,334.8 286.5,335.9 289.5,336.8 292.5,337.6 295.5,338.2 298.5,338.7 301.5,339.1 304.5,339.5 307.5,339.8 310.5,340.0 313.5,340.2 316.5,340.4 319.5,340.5 322.5,340.7 325.5,340.8 328.5,340.9 331.5,341.0 334.5,341.1 337.5,341.2 340.5,341.3 343.5,341.4 346.5,341.5 349.5,341.6 352.5,341.7 355.5,341.8 358.5,341.9 361.5,342.0 364.5,342.1 367.5,342.1 370.5,342.2 373.5,342.3 376.5,342.4 379.5,342.5 382.5,342.6 385.5,342.6 388.5,342.7 391.5,342.8 394.5,342.9 397.5,343.0 400.5,343.1 403.5,343.1 406.5,343.2 409.5,343.3 412.5,343.4 415.5,343.5 418.5,343.6 421.5,343.6 424.5,343.7 427.5,343.8 430.5,343.9 433.5,344.0 436.5,344.1 439.5,344.1" fill="none" stroke="#0a800a" stroke-width="1.0" stroke-linejoin="round" stroke-linecap="square" opacity="1.0"/><polyline points="79.5,192.8 82.5,193.8 85.5,194.9 88.5,195.9 91.5,197.0 94.5,198.0 97.5,199.1 100.5,200.1 103.5,201.2 106.5,202.2 109.5,203.3 112.5,204.3 115.5,205.4 118.5,206.4 121.5,207.5 124.5,208.5 127.5,209.6 130.5,210.6 133.5,211.7 136.5,212.7 139.5,213.8 142.5,214.8 145.5,215.9 148.5,216.9 151.5,218.0 154.5,219.1 157.5,220.1 160.5,221.2 163.5,222.2 166.5,223.3 169.5,224.3 172.5,225.4 175.5,226.5 178.5,227.5 181.5,228.6 184.5,229.7 187.5,230.8 190.5,231.9 193.5,233.0 196.5,234.1 199.5,235.3 202.5,236.5 205.5,237.7 208.5,239.0 211.5,240.3 214.5,241.7 217.5,243.2 220.5,244.8 223.5,246.5 226.5,248.4 229.5,250.5 232.5,252.9 235.5,255.5 238.5,258.5 241.5,261.9 244.5,265.6 247.5,269.8 250.5,274.3 253.5,279.2 256.5,284.4 259.5,289.6 262.5,294.9 265.5,300.0 268.5,304.9 271.5,309.3 274.5,313.3 277.5,316.8 280.5,319.7 283.5,322.2 286.5,324.3 289.5,326.0 292.5,327.3 295.5,328.4 298.5,329.3 301.5,330.0 304.5,330.6 307.5,331.1 310.5,331.5 313.5,331.8 316.5,332.0 319.5,332.2 322.5,332.4 325.5,332.6 328.5,332.7 331.5,332.9 334.5,333.0 337.5,333.1 340.5,333.2 343.5,333.3 346.5,333.4 349.5,333.5 352.5,333.6 355.5,333.7 358.5,333.8 361.5,333.8 364.5,333.9 367.5,334.0 370.5,334.1 373.5,334.2 376.5,334.3 379.5,334.4 382.5,334.4 385.5,334.5 388.5,334.6 391.5,334.7 394.5,334.8 397.5,334.9 400.5,334.9 403.5,335.0 406.5,335.1 409.5,335.2 412.5,335.3 415.5,335.4 418.5,335.4 421.5,335.5 424.5,335.6 427.5,335.7 430.5,335.8 433.5,335.9 436.5,335.9 439.5,336.0" fill="none" stroke="#0a800a" stroke-width="1.0" stroke-linejoin="round" stroke-linecap="square" opacity="1.0"/><polyline points="79.5,197.2 82.5,198.2 85.5,199.3 88.5,200.3 91.5,201.4 94.5,202.4 97.5,203.5 100.5,204.5 103.5,205.6 106.5,206.6 109.5,207.7 112.5,208.7 115.5,209.8 118.5,210.8 121.5,211.9 124.5,212.9 127.5,214.0 130.5,215.0 133.5,216.1 136.5,217.1 139.5,218.2 142.5,219.2 145.5,220.3 148.5,221.3 151.5,222.4 154.5,223.4 157.5,224.5 160.5,225.6 163.5,226.6 166.5,227.7 169.5,228.7 172.5,229.8 175.5,230.8 178.5,231.9 181.5,233.0 184.5,234.0 187.5,235.1 190.5,236.2 193.5,237.3 196.5,238.4 199.5,239.5 202.5,240.7 205.5,241.9 208.5,243.1 211.5,244.3 214.5,245.6 217.5,247.0 220.5,248.5 223.5,250.1 226.5,251.8 229.5,253.7 232.5,255.8 235.5,258.1 238.5,260.7 241.5,263.7 244.5,267.0 247.5,270.7 250.5,274.8 253.5,279.3 256.5,284.0 259.5,288.9 262.5,293.9 265.5,298.7 268.5,303.4 271.5,307.6 274.5,311.5 277.5,314.8 280.5,317.7 283.5,320.1 286.5,322.0 289.5,323.6 292.5,324.9 295.5,326.0 298.5,326.8 301.5,327.4 304.5,328.0 307.5,328.4 310.5,328.7 313.5,329.0 316.5,329.3 319.5,329.5 322.5,329.6 325.5,329.8 328.5,329.9 331.5,330.0 334.5,330.2 337.5,330.3 340.5,330.4 343.5,330.5 346.5,330.5 349.5,330.6 352.5,330.7 355.5,330.8 358.5,330.9 361.5,331.0 364.5,331.1 367.5,331.2 370.5,331.2 373.5,331.3 376.5,331.4 379.5,331.5 382.5,331.6 385.5,331.7 388.5,331.7 391.5,331.8 394.5,331.9 397.5,332.0 400.5,332.1 403.5,332.2 406.5,332.2 409.5,332.3 412.5,332.4 415.5,332.5 418.5,332.6 421.5,332.7 424.5,332.7 427.5,332.8 430.5,332.9 433.5,333.0 436.5,333.1 439.5,333.2" fill="none" stroke="#0a800a" stroke-width="1.0" stroke-linejoin="round" stroke-linecap="square" opacity="1.0"/><polyline points="79.5,186.6 82.5,187.7 85.5,188.8 88.5,189.9 91.5,191.0 94.5,192.1 97.5,193.2 100.5,194.3 103.5,195.4 106.5,196.5 109.5,197.6 112.5,198.7 115.5,199.8 118.5,200.9 121.5,202.0 124.5,203.1 127.5,204.2 130.5,205.3 133.5,206.4 136.5,207.5 139.5,208.6 142.5,209.7 145.5,210.8 148.5,211.9 151.5,213.0 154.5,214.1 157.5,215.3 160.5,216.4 163.5,217.5 166.5,218.6 169.5,219.8 172.5,220.9 175.5,222.1 178.5,223.2 181.5,224.4 184.5,225.6 187.5,226.8 190.5,228.0 193.5,229.3 196.5,230.6 199.5,231.9 202.5,233.3 205.5,234.7 208.5,236.1 211.5,237.7 214.5,239.3 217.5,240.9 220.5,242.7 223.5,244.6 226.5,246.7 229.5,248.8 232.5,251.2 235.5,253.7 238.5,256.4 241.5,259.3 244.5,262.5 247.5,265.8 250.5,269.4 253.5,273.2 256.5,277.1 259.5,281.2 262.5,285.4 265.5,289.6 268.5,293.8 271.5,297.9 274.5,301.8 277.5,305.6 280.5,309.1 283.5,312.4 286.5,315.4 289.5,318.1 292.5,320.5 295.5,322.6 298.5,324.5 301.5,326.1 304.5,327.5 307.5,328.7 310.5,329.7 313.5,330.6 316.5,331.3 319.5,332.0 322.5,332.5 325.5,333.0 328.5,333.4 331.5,333.7 334.5,334.0 337.5,334.3 340.5,334.5 343.5,334.7 346.5,334.9 349.5,335.1 352.5,335.2 355.5,335.4 358.5,335.5 361.5,335.6 364.5,335.7 367.5,335.8 370.5,335.9 373.5,336.0 376.5,336.1 379.5,336.2 382.5,336.3 385.5,336.4 388.5,336.5 391.5,336.6 394.5,336.7 397.5,336.8 400.5,336.8 403.5,336.9 406.5,337.0 409.5,337.1 412.5,337.2 415.5,337.3 418.5,337.4 421.5,337.4 424.5,337.5 427.5,337.6 430.5,337.7 433.5,337.8 436.5,337.9 439.5,337.9" fill="none" stroke="#0a800a" stroke-width="1.0" stroke-linejoin="round" stroke-linecap="square" opacity="1.0"/><polyline points="79.5,212.4 82.5,213.2 85.5,214.0 88.5,214.9 91.5,215.7 94.5,216.5 97.5,217.4 100.5,218.2 103.5,219.0 106.5,219.9 109.5,220.7 112.5,221.5 115.5,222.4 118.5,223.2 121.5,224.1 124.5,224.9 127.5,225.7 130.5,226.6 133.5,227.4 136.5,228.2 139.5,229.1 142.5,229.9 145.5,230.7 148.5,231.6 151.5,232.4 154.5,233.2 157.5,234.1 160.5,234.9 163.5,235.8 166.5,236.6 169.5,237.4 172.5,238.3 175.5,239.1 178.5,239.9 181.5,240.8 184.5,241.6 187.5,242.5 190.5,243.3 193.5,244.1 196.5,245.0 199.5,245.8 202.5,246.7 205.5,247.5 208.5,248.4 211.5,249.2 214.5,250.1 217.5,250.9 220.5,251.8 223.5,252.7 226.5,253.5 229.5,254.4 232.5,255.4 235.5,256.3 238.5,257.2 241.5,258.2 244.5,259.2 247.5,260.3 250.5,261.4 253.5,262.6 256.5,263.9 259.5,265.3 262.5,266.8 265.5,268.4 268.5,270.2 271.5,272.2 274.5,274.4 277.5,276.9 280.5,279.7 283.5,282.7 286.5,285.9 289.5,289.4 292.5,293.1 295.5,296.8 298.5,300.6 301.5,304.4 304.5,307.9 307.5,311.3 310.5,314.3 313.5,317.0 316.5,319.4 319.5,321.4 322.5,323.1 325.5,324.6 328.5,325.7 331.5,326.7 334.5,327.5 337.5,328.2 340.5,328.7 343.5,329.2 346.5,329.6 349.5,329.9 352.5,330.1 355.5,330.3 358.5,330.5 361.5,330.7 364.5,330.9 367.5,331.0 370.5,331.1 373.5,331.2 376.5,331.3 379.5,331.4 382.5,331.5 385.5,331.6 388.5,331.7 391.5,331.8 394.5,331.9 397.5,332.0 400.5,332.1 403.5,332.2 406.5,332.2 409.5,332.3 412.5,332.4 415.5,332.5 418.5,332.6 421.5,332.7 424.5,332.7 427.5,332.8 430.5,332.9 433.5,333.0 436.5,333.1 439.5,333.2" fill="none" stroke="#0a800a" stroke-width="1.0" stroke-linejoin="round" stroke-linecap="square" opacity="1.0"/><polyline points="79.5,218.4 82.5,219.2 85.5,220.0 88.5,220.8 91.5,221.7 94.5,222.5 97.5,223.3 100.5,224.1 103.5,225.0 106.5,225.8 109.5,226.6 112.5,227.4 115.5,228.3 118.5,229.1 121.5,229.9 124.5,230.7 127.5,231.6 130.5,232.4 133.5,233.2 136.5,234.0 139.5,234.8 142.5,235.7 145.5,236.5 148.5,237.3 151.5,238.1 154.5,239.0 157.5,239.8 160.5,240.6 163.5,241.4 166.5,242.3 169.5,243.1 172.5,243.9 175.5,244.7 178.5,245.6 181.5,246.4 184.5,247.2 187.5,248.1 190.5,248.9 193.5,249.7 196.5,250.5 199.5,251.4 202.5,252.2 205.5,253.1 208.5,253.9 211.5,254.7 214.5,255.6 217.5,256.5 220.5,257.3 223.5,258.2 226.5,259.1 229.5,260.0 232.5,261.0 235.5,261.9 238.5,262.9 241.5,263.9 244.5,265.0 247.5,266.1 250.5,267.3 253.5,268.6 256.5,270.0 259.5,271.5 262.5,273.1 265.5,274.9 268.5,276.8 271.5,279.0 274.5,281.3 277.5,283.9 280.5,286.7 283.5,289.7 286.5,292.9 289.5,296.3 292.5,299.7 295.5,303.2 298.5,306.6 301.5,309.9 304.5,313.0 307.5,315.8 310.5,318.4 313.5,320.7 316.5,322.7 319.5,324.4 322.5,325.8 325.5,327.1 328.5,328.1 331.5,329.0 334.5,329.7 337.5,330.3 340.5,330.8 343.5,331.2 346.5,331.5 349.5,331.8 352.5,332.0 355.5,332.3 358.5,332.4 361.5,332.6 364.5,332.8 367.5,332.9 370.5,333.0 373.5,333.1 376.5,333.2 379.5,333.3 382.5,333.4 385.5,333.5 388.5,333.6 391.5,333.7 394.5,333.8 397.5,333.9 400.5,334.0 403.5,334.1 406.5,334.1 409.5,334.2 412.5,334.3 415.5,334.4 418.5,334.5 421.5,334.6 424.5,334.7 427.5,334.7 430.5,334.8 433.5,334.9 436.5,335.0 439.5,335.1" fill="none" stroke="#0a800a" stroke-width="1.0" stroke-linejoin="round" stroke-linecap="square" opacity="1.0"/><polyline points="79.5,227.3 82.5,228.1 85.5,229.0 88.5,229.8 91.5,230.7 94.5,231.6 97.5,232.4 100.5,233.3 103.5,234.1 106.5,235.0 109.5,235.9 112.5,236.7 115.5,237.6 118.5,238.4 121.5,239.3 124.5,240.1 127.5,241.0 130.5,241.9 133.5,242.7 136.5,243.6 139.5,244.4 142.5,245.3 145.5,246.2 148.5,247.0 151.5,247.9 154.5,248.7 157.5,249.6 160.5,250.5 163.5,251.3 166.5,252.2 169.5,253.0 172.5,253.9 175.5,254.8 178.5,255.6 181.5,256.5 184.5,257.4 187.5,258.2 190.5,259.1 193.5,260.0 196.5,260.8 199.5,261.7 202.5,262.6 205.5,263.4 208.5,264.3 211.5,265.2 214.5,266.1 217.5,267.0 220.5,267.9 223.5,268.8 226.5,269.8 229.5,270.7 232.5,271.7 235.5,272.7 238.5,273.7 241.5,274.8 244.5,275.9 247.5,277.1 250.5,278.4 253.5,279.7 256.5,281.1 259.5,282.7 262.5,284.3 265.5,286.2 268.5,288.1 271.5,290.3 274.5,292.7 277.5,295.2 280.5,297.9 283.5,300.8 286.5,303.8 289.5,306.9 292.5,310.0 295.5,313.0 298.5,316.0 301.5,318.7 304.5,321.3 307.5,323.6 310.5,325.7 313.5,327.4 316.5,329.0 319.5,330.3 322.5,331.4 325.5,332.3 328.5,333.1 331.5,333.7 334.5,334.3 337.5,334.7 340.5,335.1 343.5,335.4 346.5,335.6 349.5,335.9 352.5,336.1 355.5,336.2 358.5,336.4 361.5,336.5 364.5,336.7 367.5,336.8 370.5,336.9 373.5,337.0 376.5,337.1 379.5,337.2 382.5,337.3 385.5,337.4 388.5,337.5 391.5,337.5 394.5,337.6 397.5,337.7 400.5,337.8 403.5,337.9 406.5,338.0 409.5,338.1 412.5,338.1 415.5,338.2 418.5,338.3 421.5,338.4 424.5,338.5 427.5,338.6 430.5,338.6 433.5,338.7 436.5,338.8 439.5,338.9" fill="none" stroke="#0a800a" stroke-width="1.0" stroke-linejoin="round" stroke-linecap="square" opacity="1.0"/><polyline points="79.5,175.6 82.5,176.7 85.5,177.8 88.5,179.0 91.5,180.1 94.5,181.2 97.5,182.3 100.5,183.4 103.5,184.6 106.5,185.7 109.5,186.8 112.5,187.9 115.5,189.1 118.5,190.2 121.5,191.3 124.5,192.4 127.5,193.5 130.5,194.7 133.5,195.8 136.5,196.9 139.5,198.0 142.5,199.2 145.5,200.3 148.5,201.4 151.5,202.5 154.5,203.6 157.5,204.8 160.5,205.9 163.5,207.0 166.5,208.1 169.5,209.3 172.5,210.4 175.5,211.5 178.5,212.6 181.5,213.8 184.5,214.9 187.5,216.0 190.5,217.1 193.5,218.3 196.5,219.4 199.5,220.5 202.5,221.7 205.5,222.8 208.5,223.9 211.5,225.1 214.5,226.2 217.5,227.4 220.5,228.5 223.5,229.7 226.5,230.9 229.5,232.1 232.5,233.4 235.5,234.6 238.5,235.9 241.5,237.2 244.5,238.6 247.5,240.1 250.5,241.6 253.5,243.2 256.5,244.9 259.5,246.8 262.5,248.8 265.5,251.1 268.5,253.5 271.5,256.3 274.5,259.3 277.5,262.7 280.5,266.3 283.5,270.4 286.5,274.7 289.5,279.3 292.5,284.0 295.5,288.9 298.5,293.7 301.5,298.4 304.5,302.8 307.5,306.9 310.5,310.6 313.5,313.9 316.5,316.7 319.5,319.1 322.5,321.1 325.5,322.8 328.5,324.2 331.5,325.3 334.5,326.2 337.5,327.0 340.5,327.6 343.5,328.1 346.5,328.5 349.5,328.8 352.5,329.1 355.5,329.3 358.5,329.5 361.5,329.7 364.5,329.9 367.5,330.0 370.5,330.1 373.5,330.3 376.5,330.4 379.5,330.5 382.5,330.6 385.5,330.7 388.5,330.8 391.5,330.8 394.5,330.9 397.5,331.0 400.5,331.1 403.5,331.2 406.5,331.3 409.5,331.4 412.5,331.5 415.5,331.5 418.5,331.6 421.5,331.7 424.5,331.8 427.5,331.9 430.5,332.0 433.5,332.0 436.5,332.1 439.5,332.2" fill="none" stroke="#0a800a" stroke-width="1.0" stroke-linejoin="round" stroke-linecap="square" opacity="1.0"/><polyline points="79.5,247.8 82.5,248.4 85.5,249.1 88.5,249.7 91.5,250.4 94.5,251.0 97.5,251.7 100.5,252.3 103.5,252.9 106.5,253.6 109.5,254.2 112.5,254.9 115.5,255.5 118.5,256.2 121.5,256.8 124.5,257.5 127.5,258.1 130.5,258.7 133.5,259.4 136.5,260.0 139.5,260.7 142.5,261.3 145.5,262.0 148.5,262.6 151.5,263.3 154.5,263.9 157.5,264.5 160.5,265.2 163.5,265.8 166.5,266.5 169.5,267.1 172.5,267.8 175.5,268.4 178.5,269.1 181.5,269.7 184.5,270.3 187.5,271.0 190.5,271.6 193.5,272.3 196.5,272.9 199.5,273.6 202.5,274.2 205.5,274.9 208.5,275.5 211.5,276.2 214.5,276.8 217.5,277.4 220.5,278.1 223.5,278.7 226.5,279.4 229.5,280.0 232.5,280.7 235.5,281.3 238.5,282.0 241.5,282.6 244.5,283.3 247.5,283.9 250.5,284.6 253.5,285.2 256.5,285.9 259.5,286.5 262.5,287.2 265.5,287.9 268.5,288.6 271.5,289.3 274.5,290.0 277.5,290.8 280.5,291.6 283.5,292.5 286.5,293.4 289.5,294.4 292.5,295.5 295.5,296.8 298.5,298.2 301.5,299.9 304.5,301.7 307.5,303.9 310.5,306.2 313.5,308.7 316.5,311.4 319.5,314.1 322.5,316.7 325.5,319.1 328.5,321.3 331.5,323.1 334.5,324.7 337.5,325.9 340.5,326.9 343.5,327.6 346.5,328.2 349.5,328.7 352.5,329.1 355.5,329.3 358.5,329.6 361.5,329.8 364.5,329.9 367.5,330.1 370.5,330.2 373.5,330.3 376.5,330.4 379.5,330.5 382.5,330.6 385.5,330.7 388.5,330.8 391.5,330.9 394.5,331.0 397.5,331.0 400.5,331.1 403.5,331.2 406.5,331.3 409.5,331.4 412.5,331.5 415.5,331.5 418.5,331.6 421.5,331.7 424.5,331.8 427.5,331.9 430.5,332.0 433.5,332.0 436.5,332.1 439.5,332.2" fill="none" stroke="#0a800a" stroke-width="1.0" stroke-linejoin="round" stroke-linecap="square" opacity="1.0"/><polyline points="79.5,249.1 82.5,249.8 85.5,250.5 88.5,251.1 91.5,251.8 94.5,252.5 97.5,253.1 100.5,253.8 103.5,254.5 106.5,255.1 109.5,255.8 112.5,256.5 115.5,257.1 118.5,257.8 121.5,258.5 124.5,259.2 127.5,259.8 130.5,260.5 133.5,261.2 136.5,261.8 139.5,262.5 142.5,263.2 145.5,263.8 148.5,264.5 151.5,265.2 154.5,265.8 157.5,266.5 160.5,267.2 163.5,267.8 166.5,268.5 169.5,269.2 172.5,269.8 175.5,270.5 178.5,271.2 181.5,271.9 184.5,272.5 187.5,273.2 190.5,273.9 193.5,274.5 196.5,275.2 199.5,275.9 202.5,276.5 205.5,277.2 208.5,277.9 211.5,278.5 214.5,279.2 217.5,279.9 220.5,280.5 223.5,281.2 226.5,281.9 229.5,282.6 232.5,283.2 235.5,283.9 238.5,284.6 241.5,285.2 244.5,285.9 247.5,286.6 250.5,287.3 253.5,287.9 256.5,288.6 259.5,289.3 262.5,290.0 265.5,290.7 268.5,291.4 271.5,292.2 274.5,292.9 277.5,293.7 280.5,294.5 283.5,295.4 286.5,296.3 289.5,297.4 292.5,298.5 295.5,299.7 298.5,301.2 301.5,302.8 304.5,304.7 307.5,306.7 310.5,309.0 313.5,311.5 316.5,314.1 319.5,316.7 322.5,319.2 325.5,321.5 328.5,323.6 331.5,325.4 334.5,326.8 337.5,328.0 340.5,328.9 343.5,329.7 346.5,330.2 349.5,330.7 352.5,331.0 355.5,331.3 358.5,331.5 361.5,331.7 364.5,331.9 367.5,332.0 370.5,332.1 373.5,332.2 376.5,332.3 379.5,332.4 382.5,332.5 385.5,332.6 388.5,332.7 391.5,332.8 394.5,332.9 397.5,332.9 400.5,333.0 403.5,333.1 406.5,333.2 409.5,333.3 412.5,333.4 415.5,333.5 418.5,333.5 421.5,333.6 424.5,333.7 427.5,333.8 430.5,333.9 433.5,334.0 436.5,334.0 439.5,334.1" fill="none" stroke="#0a800a" stroke-width="1.0" stroke-linejoin="round" stroke-linecap="square" opacity="1.0"/><polyline points="79.5,250.1 82.5,250.8 85.5,251.5 88.5,252.2 91.5,252.8 94.5,253.5 97.5,254.2 100.5,254.9 103.5,255.6 106.5,256.3 109.5,257.0 112.5,257.7 115.5,258.4 118.5,259.1 121.5,259.8 124.5,260.5 127.5,261.2 130.5,261.9 133.5,262.5 136.5,263.2 139.5,263.9 142.5,264.6 145.5,265.3 148.5,266.0 151.5,266.7 154.5,267.4 157.5,268.1 160.5,268.8 163.5,269.5 166.5,270.2 169.5,270.9 172.5,271.5 175.5,272.2 178.5,272.9 181.5,273.6 184.5,274.3 187.5,275.0 190.5,275.7 193.5,276.4 196.5,277.1 199.5,277.8 202.5,278.5 205.5,279.2 208.5,279.9 211.5,280.5 214.5,281.2 217.5,281.9 220.5,282.6 223.5,283.3 226.5,284.0 229.5,284.7 232.5,285.4 235.5,286.1 238.5,286.8 241.5,287.5 244.5,288.2 247.5,288.9 250.5,289.6 253.5,290.3 256.5,291.0 259.5,291.7 262.5,292.4 265.5,293.1 268.5,293.9 271.5,294.6 274.5,295.4 277.5,296.2 280.5,297.0 283.5,297.9 286.5,298.8 289.5,299.8 292.5,300.9 295.5,302.2 298.5,303.5 301.5,305.1 304.5,306.9 307.5,308.9 310.5,311.1 313.5,313.5 316.5,316.1 319.5,318.7 322.5,321.2 325.5,323.6 328.5,325.8 331.5,327.7 334.5,329.2 337.5,330.5 340.5,331.5 343.5,332.3 346.5,332.9 349.5,333.4 352.5,333.8 355.5,334.1 358.5,334.3 361.5,334.5 364.5,334.7 367.5,334.8 370.5,335.0 373.5,335.1 376.5,335.2 379.5,335.3 382.5,335.4 385.5,335.5 388.5,335.6 391.5,335.6 394.5,335.7 397.5,335.8 400.5,335.9 403.5,336.0 406.5,336.1 409.5,336.1 412.5,336.2 415.5,336.3 418.5,336.4 421.5,336.5 424.5,336.6 427.5,336.7 430.5,336.7 433.5,336.8 436.5,336.9 439.5,337.0" fill="none" stroke="#0a800a" stroke-width="1.0" stroke-linejoin="round" stroke-linecap="square" opacity="1.0"/><polyline points="79.5,251.0 82.5,251.8 85.5,252.5 88.5,253.2 91.5,253.9 94.5,254.6 97.5,255.3 100.5,256.0 103.5,256.8 106.5,257.5 109.5,258.2 112.5,258.9 115.5,259.6 118.5,260.3 121.5,261.1 124.5,261.8 127.5,262.5 130.5,263.2 133.5,263.9 136.5,264.6 139.5,265.4 142.5,266.1 145.5,266.8 148.5,267.5 151.5,268.2 154.5,268.9 157.5,269.7 160.5,270.4 163.5,271.1 166.5,271.8 169.5,272.5 172.5,273.2 175.5,274.0 178.5,274.7 181.5,275.4 184.5,276.1 187.5,276.8 190.5,277.5 193.5,278.3 196.5,279.0 199.5,279.7 202.5,280.4 205.5,281.1 208.5,281.8 211.5,282.6 214.5,283.3 217.5,284.0 220.5,284.7 223.5,285.4 226.5,286.1 229.5,286.9 232.5,287.6 235.5,288.3 238.5,289.0 241.5,289.7 244.5,290.4 247.5,291.2 250.5,291.9 253.5,292.6 256.5,293.4 259.5,294.1 262.5,294.8 265.5,295.6 268.5,296.4 271.5,297.2 274.5,298.0 277.5,298.8 280.5,299.7 283.5,300.7 286.5,301.7 289.5,302.8 292.5,304.0 295.5,305.4 298.5,307.0 301.5,308.8 304.5,310.8 307.5,313.0 310.5,315.4 313.5,318.0 316.5,320.7 319.5,323.3 322.5,325.8 325.5,328.0 328.5,330.0 331.5,331.7 334.5,333.0 337.5,334.1 340.5,335.0 343.5,335.6 346.5,336.1 349.5,336.5 352.5,336.8 355.5,337.1 358.5,337.3 361.5,337.5 364.5,337.6 367.5,337.7 370.5,337.9 373.5,338.0 376.5,338.1 379.5,338.2 382.5,338.2 385.5,338.3 388.5,338.4 391.5,338.5 394.5,338.6 397.5,338.7 400.5,338.8 403.5,338.8 406.5,338.9 409.5,339.0 412.5,339.1 415.5,339.2 418.5,339.3 421.5,339.3 424.5,339.4 427.5,339.5 430.5,339.6 433.5,339.7 436.5,339.8 439.5,339.8" fill="none" stroke="#0a800a" stroke-width="1.0" stroke-linejoin="round" stroke-linecap="square" opacity="1.0"/><polyline points="79.5,274.0 82.5,274.5 85.5,275.1 88.5,275.6 91.5,276.2 94.5,276.8 97.5,277.3 100.5,277.9 103.5,278.4 106.5,279.0 109.5,279.6 112.5,280.1 115.5,280.7 118.5,281.2 121.5,281.8 124.5,282.4 127.5,282.9 130.5,283.5 133.5,284.1 136.5,284.6 139.5,285.2 142.5,285.7 145.5,286.3 148.5,286.9 151.5,287.4 154.5,288.0 157.5,288.5 160.5,289.1 163.5,289.7 166.5,290.2 169.5,290.8 172.5,291.3 175.5,291.9 178.5,292.5 181.5,293.0 184.5,293.6 187.5,294.2 190.5,294.7 193.5,295.3 196.5,295.8 199.5,296.4 202.5,297.0 205.5,297.5 208.5,298.1 211.5,298.6 214.5,299.2 217.5,299.8 220.5,300.3 223.5,300.9 226.5,301.4 229.5,302.0 232.5,302.6 235.5,303.1 238.5,303.7 241.5,304.3 244.5,304.8 247.5,305.4 250.5,305.9 253.5,306.5 256.5,307.1 259.5,307.6 262.5,308.2 265.5,308.8 268.5,309.3 271.5,309.9 274.5,310.5 277.5,311.1 280.5,311.6 283.5,312.2 286.5,312.8 289.5,313.4 292.5,314.0 295.5,314.5 298.5,315.1 301.5,315.7 304.5,316.2 307.5,316.7 310.5,317.2 313.5,317.6 316.5,317.9 319.5,318.1 322.5,318.3 325.5,318.4 328.5,318.5 331.5,318.5 334.5,318.5 337.5,318.5 340.5,318.5 343.5,318.5 346.5,318.5 349.5,318.5 352.5,318.5 355.5,318.6 358.5,318.6 361.5,318.7 364.5,318.7 367.5,318.8 370.5,318.9 373.5,318.9 376.5,319.0 379.5,319.1 382.5,319.2 385.5,319.3 388.5,319.3 391.5,319.4 394.5,319.5 397.5,319.6 400.5,319.7 403.5,319.7 406.5,319.8 409.5,319.9 412.5,320.0 415.5,320.1 418.5,320.2 421.5,320.2 424.5,320.3 427.5,320.4 430.5,320.5 433.5,320.6 436.5,320.7 439.5,320.8" fill="none" stroke="#0a800a" stroke-width="1.0" stroke-linejoin="round" stroke-linecap="square" opacity="1.0"/><polyline points="79.5,289.2 82.5,289.7 85.5,290.1 88.5,290.6 91.5,291.0 94.5,291.4 97.5,291.9 100.5,292.3 103.5,292.8 106.5,293.2 109.5,293.7 112.5,294.1 115.5,294.5 118.5,295.0 121.5,295.4 124.5,295.9 127.5,296.3 130.5,296.7 133.5,297.2 136.5,297.6 139.5,298.1 142.5,298.5 145.5,299.0 148.5,299.4 151.5,299.8 154.5,300.3 157.5,300.7 160.5,301.2 163.5,301.6 166.5,302.0 169.5,302.5 172.5,302.9 175.5,303.4 178.5,303.8 181.5,304.3 184.5,304.7 187.5,305.1 190.5,305.6 193.5,306.0 196.5,306.5 199.5,306.9 202.5,307.3 205.5,307.8 208.5,308.2 211.5,308.7 214.5,309.1 217.5,309.6 220.5,310.0 223.5,310.4 226.5,310.9 229.5,311.3 232.5,311.8 235.5,312.2 238.5,312.6 241.5,313.1 244.5,313.5 247.5,314.0 250.5,314.4 253.5,314.9 256.5,315.3 259.5,315.8 262.5,316.2 265.5,316.7 268.5,317.1 271.5,317.6 274.5,318.0 277.5,318.5 280.5,318.9 283.5,319.4 286.5,319.9 289.5,320.4 292.5,320.9 295.5,321.4 298.5,322.0 301.5,322.5 304.5,323.1 307.5,323.7 310.5,324.2 313.5,324.8 316.5,325.3 319.5,325.8 322.5,326.2 325.5,326.5 328.5,326.8 331.5,327.1 334.5,327.3 337.5,327.4 340.5,327.6 343.5,327.7 346.5,327.8 349.5,327.8 352.5,327.9 355.5,328.0 358.5,328.1 361.5,328.2 364.5,328.2 367.5,328.3 370.5,328.4 373.5,328.5 376.5,328.6 379.5,328.6 382.5,328.7 385.5,328.8 388.5,328.9 391.5,329.0 394.5,329.0 397.5,329.1 400.5,329.2 403.5,329.3 406.5,329.4 409.5,329.5 412.5,329.5 415.5,329.6 418.5,329.7 421.5,329.8 424.5,329.9 427.5,330.0 430.5,330.0 433.5,330.1 436.5,330.2 439.5,330.3" fill="none" stroke="#0a800a" stroke-width="1.0" stroke-linejoin="round" stroke-linecap="square" opacity="1.0"/><polyline points="79.5,143.3 82.5,144.3 85.5,145.2 88.5,146.2 91.5,147.2 94.5,148.2 97.5,149.2 100.5,150.3 103.5,151.3 106.5,152.4 109.5,153.4 112.5,154.5 115.5,155.6 118.5,156.7 121.5,157.8 124.5,159.0 127.5,160.2 130.5,161.5 133.5,162.9 136.5,164.4 139.5,166.0 142.5,167.8 145.5,169.6 148.5,171.6 151.5,173.7 154.5,175.9 157.5,178.2 160.5,180.6 163.5,183.2 166.5,185.9 169.5,188.7 172.5,191.7 175.5,194.8 178.5,198.1 181.5,201.6 184.5,205.2 187.5,209.1 190.5,213.1 193.5,217.3 196.5,221.7 199.5,226.3 202.5,231.0 205.5,236.0 208.5,241.1 211.5,246.5 214.5,252.0 217.5,257.6 220.5,263.2 223.5,268.6 226.5,273.8 229.5,278.7 232.5,283.3 235.5,287.5 238.5,291.4 241.5,294.8 244.5,297.9 247.5,300.6 250.5,303.1 253.5,305.3 256.5,307.2 259.5,308.8 262.5,310.1 265.5,311.2 268.5,312.0 271.5,312.5 274.5,312.9 277.5,313.2 280.5,313.4 283.5,313.6 286.5,313.7 289.5,313.9 292.5,314.0 295.5,314.1 298.5,314.2 301.5,314.3 304.5,314.5 307.5,314.8 310.5,315.1 313.5,315.5 316.5,316.1 319.5,316.7 322.5,317.4 325.5,318.0 328.5,318.5 331.5,318.8 334.5,319.1 337.5,319.3 340.5,319.5 343.5,319.6 346.5,319.7 349.5,319.8 352.5,319.9 355.5,320.0 358.5,320.1 361.5,320.1 364.5,320.2 367.5,320.3 370.5,320.3 373.5,320.4 376.5,320.5 379.5,320.5 382.5,320.6 385.5,320.7 388.5,320.7 391.5,320.8 394.5,320.9 397.5,320.9 400.5,321.0 403.5,321.0 406.5,321.1 409.5,321.1 412.5,321.2 415.5,321.3 418.5,321.3 421.5,321.4 424.5,321.4 427.5,321.5 430.5,321.5 433.5,321.6 436.5,321.6 439.5,321.7" fill="none" stroke="#0a800a" stroke-width="1.0" stroke-linejoin="round" stroke-linecap="square" opacity="1.0"/><polyline points="79.5,272.1 82.5,272.4 85.5,272.6 88.5,272.9 91.5,273.2 94.5,273.5 97.5,273.8 100.5,274.1 103.5,274.5 106.5,274.8 109.5,275.1 112.5,275.5 115.5,275.8 118.5,276.2 121.5,276.6 124.5,277.0 127.5,277.5 130.5,278.0 133.5,278.6 136.5,279.2 139.5,279.9 142.5,280.8 145.5,281.7 148.5,282.8 151.5,284.1 154.5,285.5 157.5,287.1 160.5,288.9 163.5,290.9 166.5,293.0 169.5,295.2 172.5,297.4 175.5,299.5 178.5,301.6 181.5,303.5 184.5,305.2 187.5,306.7 190.5,308.1 193.5,309.2 196.5,310.2 199.5,311.0 202.5,311.6 205.5,312.2 208.5,312.6 211.5,313.0 214.5,313.3 217.5,313.6 220.5,313.8 223.5,314.0 226.5,314.2 229.5,314.3 232.5,314.5 235.5,314.6 238.5,314.7 241.5,314.8 244.5,314.9 247.5,315.0 250.5,315.1 253.5,315.2 256.5,315.3 259.5,315.4 262.5,315.5 265.5,315.6 268.5,315.6 271.5,315.7 274.5,315.8 277.5,315.9 280.5,316.0 283.5,316.1 286.5,316.2 289.5,316.3 292.5,316.4 295.5,316.5 298.5,316.6 301.5,316.7 304.5,316.9 307.5,317.1 310.5,317.3 313.5,317.7 316.5,318.1 319.5,318.5 322.5,318.9 325.5,319.3 328.5,319.7 331.5,319.9 334.5,320.1 337.5,320.3 340.5,320.4 343.5,320.6 346.5,320.7 349.5,320.8 352.5,320.8 355.5,320.9 358.5,321.0 361.5,321.1 364.5,321.2 367.5,321.3 370.5,321.4 373.5,321.4 376.5,321.5 379.5,321.6 382.5,321.7 385.5,321.8 388.5,321.9 391.5,321.9 394.5,322.0 397.5,322.1 400.5,322.2 403.5,322.3 406.5,322.4 409.5,322.4 412.5,322.5 415.5,322.6 418.5,322.7 421.5,322.8 424.5,322.9 427.5,322.9 430.5,323.0 433.5,323.1 436.5,323.2 439.5,323.3" fill="none" stroke="#0a800a" stroke-width="1.0" stroke-linejoin="round" stroke-linecap="square" opacity="1.0"/><polyline points="79.5,351.1 82.5,351.2 85.5,351.2 88.5,351.2 91.5,351.3 94.5,351.3 97.5,351.3 100.5,351.4 103.5,351.4 106.5,351.5 109.5,351.5 112.5,351.5 115.5,351.6 118.5,351.6 121.5,351.7 124.5,351.7 127.5,351.7 130.5,351.8 133.5,351.8 136.5,351.8 139.5,351.9 142.5,351.9 145.5,352.0 148.5,352.0 151.5,352.0 154.5,352.1 157.5,352.1 160.5,352.2 163.5,352.2 166.5,352.2 169.5,352.3 172.5,352.3 175.5,352.3 178.5,352.4 181.5,352.4 184.5,352.5 187.5,352.5 190.5,352.5 193.5,352.6 196.5,352.6 199.5,352.6 202.5,352.7 205.5,352.7 208.5,352.8 211.5,352.8 214.5,352.8 217.5,352.9 220.5,352.9 223.5,353.0 226.5,353.0 229.5,353.0 232.5,353.1 235.5,353.1 238.5,353.1 241.5,353.2 244.5,353.2 247.5,353.3 250.5,353.3 253.5,353.3 256.5,353.4 259.5,353.4 262.5,353.4 265.5,353.5 268.5,353.5 271.5,353.6 274.5,353.6 277.5,353.6 280.5,353.7 283.5,353.7 286.5,353.8 289.5,353.8 292.5,353.8 295.5,353.9 298.5,353.9 301.5,353.9 304.5,354.0 307.5,354.0 310.5,354.1 313.5,354.1 316.5,354.1 319.5,354.2 322.5,354.2 325.5,354.3 328.5,354.3 331.5,354.3 334.5,354.4 337.5,354.4 340.5,354.4 343.5,354.5 346.5,354.5 349.5,354.6 352.5,354.6 355.5,354.6 358.5,354.7 361.5,354.7 364.5,354.7 367.5,354.8 370.5,354.8 373.5,354.9 376.5,354.9 379.5,354.9 382.5,355.0 385.5,355.0 388.5,355.1 391.5,355.1 394.5,355.1 397.5,355.2 400.5,355.2 403.5,355.2 406.5,355.3 409.5,355.3 412.5,355.4 415.5,355.4 418.5,355.4 421.5,355.5 424.5,355.5 427.5,355.6 430.5,355.6 433.5,355.6 436.5,355.7 439.5,355.7" fill="none" stroke="#0a800a" stroke-width="1.0" stroke-linejoin="round" stroke-linecap="square" opacity="1.0"/></g><rect x="61.5" y="131.5" width="396" height="228" fill="none" stroke="#000" stroke-width="1" shape-rendering="crispEdges"/><path d="M67.5 358V362M67.5 132V134M79.5 358V362M79.5 132V134M91.5 358V362M91.5 132V134M103.5 358V362M103.5 132V134M115.5 358V362M115.5 132V134M127.5 358V362M127.5 132V134M139.5 358V362M139.5 132V134M151.5 358V362M151.5 132V134M163.5 358V362M163.5 132V134M175.5 358V362M175.5 132V134M187.5 358V362M187.5 132V134M199.5 358V362M199.5 132V134M211.5 358V362M211.5 132V134M223.5 358V362M223.5 132V134M235.5 358V362M235.5 132V134M247.5 358V362M247.5 132V134M259.5 358V362M259.5 132V134M271.5 358V362M271.5 132V134M283.5 358V362M283.5 132V134M295.5 358V362M295.5 132V134M307.5 358V362M307.5 132V134M319.5 358V362M319.5 132V134M331.5 358V362M331.5 132V134M343.5 358V362M343.5 132V134M355.5 358V362M355.5 132V134M367.5 358V362M367.5 132V134M379.5 358V362M379.5 132V134M391.5 358V362M391.5 132V134M403.5 358V362M403.5 132V134M415.5 358V362M415.5 132V134M427.5 358V362M427.5 132V134M439.5 358V362M439.5 132V134M451.5 358V362M451.5 132V134M79.5 356V364M79.5 132V136M139.5 356V364M139.5 132V136M199.5 356V364M199.5 132V136M259.5 356V364M259.5 132V136M319.5 356V364M319.5 132V136M379.5 356V364M379.5 132V136M439.5 356V364M439.5 132V136M59 349.5H63M455 349.5H457M59 339.5H63M455 339.5H457M59 330.5H63M455 330.5H457M59 320.5H63M455 320.5H457M59 311.5H63M455 311.5H457M59 301.5H63M455 301.5H457M59 292.5H63M455 292.5H457M59 282.5H63M455 282.5H457M59 273.5H63M455 273.5H457M59 263.5H63M455 263.5H457M59 254.5H63M455 254.5H457M59 244.5H63M455 244.5H457M59 234.5H63M455 234.5H457M59 225.5H63M455 225.5H457M59 215.5H63M455 215.5H457M59 206.5H63M455 206.5H457M59 196.5H63M455 196.5H457M59 187.5H63M455 187.5H457M59 177.5H63M455 177.5H457M59 168.5H63M455 168.5H457M59 158.5H63M455 158.5H457M59 148.5H63M455 148.5H457M59 139.5H63M455 139.5H457M57 349.5H65M453 349.5H457M57 301.5H65M453 301.5H457M57 254.5H65M453 254.5H457M57 206.5H65M453 206.5H457M57 158.5H65M453 158.5H457" stroke="#000" stroke-width="1" fill="none" shape-rendering="crispEdges"/><line x1="586.5" y1="131" x2="586.5" y2="359" stroke="#000" stroke-width="1" stroke-dasharray="1 5" stroke-dashoffset="-6" shape-rendering="crispEdges"/><line x1="643.5" y1="131" x2="643.5" y2="359" stroke="#000" stroke-width="1" stroke-dasharray="1 5" stroke-dashoffset="-6" shape-rendering="crispEdges"/><line x1="701.5" y1="131" x2="701.5" y2="359" stroke="#000" stroke-width="1" stroke-dasharray="1 5" stroke-dashoffset="-6" shape-rendering="crispEdges"/><line x1="759.5" y1="131" x2="759.5" y2="359" stroke="#000" stroke-width="1" stroke-dasharray="1 5" stroke-dashoffset="-6" shape-rendering="crispEdges"/><line x1="817.5" y1="131" x2="817.5" y2="359" stroke="#000" stroke-width="1" stroke-dasharray="1 5" stroke-dashoffset="-6" shape-rendering="crispEdges"/><line x1="875.5" y1="131" x2="875.5" y2="359" stroke="#000" stroke-width="1" stroke-dasharray="1 5" stroke-dashoffset="-6" shape-rendering="crispEdges"/><line x1="933.5" y1="131" x2="933.5" y2="359" stroke="#000" stroke-width="1" stroke-dasharray="1 5" stroke-dashoffset="-6" shape-rendering="crispEdges"/><line x1="568" y1="354.5" x2="950" y2="354.5" stroke="#000" stroke-width="1" stroke-dasharray="1 5" stroke-dashoffset="-6" shape-rendering="crispEdges"/><line x1="568" y1="322.5" x2="950" y2="322.5" stroke="#000" stroke-width="1" stroke-dasharray="1 5" stroke-dashoffset="-6" shape-rendering="crispEdges"/><line x1="568" y1="289.5" x2="950" y2="289.5" stroke="#000" stroke-width="1" stroke-dasharray="1 5" stroke-dashoffset="-6" shape-rendering="crispEdges"/><line x1="568" y1="256.5" x2="950" y2="256.5" stroke="#000" stroke-width="1" stroke-dasharray="1 5" stroke-dashoffset="-6" shape-rendering="crispEdges"/><line x1="568" y1="224.5" x2="950" y2="224.5" stroke="#000" stroke-width="1" stroke-dasharray="1 5" stroke-dashoffset="-6" shape-rendering="crispEdges"/><line x1="568" y1="192.5" x2="950" y2="192.5" stroke="#000" stroke-width="1" stroke-dasharray="1 5" stroke-dashoffset="-6" shape-rendering="crispEdges"/><line x1="568" y1="159.5" x2="950" y2="159.5" stroke="#000" stroke-width="1" stroke-dasharray="1 5" stroke-dashoffset="-6" shape-rendering="crispEdges"/><g clip-path="url(#clipR)"><polyline points="586.1,339.7 591.9,321.5 597.7,321.9 603.5,321.9 609.3,321.9 615.1,321.9 620.9,321.9 626.6,322.2 632.4,322.6 638.2,322.9 644.0,322.4 649.8,321.2 655.6,319.6 661.3,317.7 667.1,315.8 672.9,314.3 678.7,313.4 684.5,313.0 690.3,312.5 696.0,312.1 701.8,311.8 707.6,311.6 713.4,311.2 719.2,309.8 725.0,305.7 730.7,295.8 736.5,276.4 742.3,245.4 748.1,205.6 753.9,166.9 759.7,142.5 765.4,144.5 771.2,182.5 777.0,239.1 782.8,291.0 788.6,325.3 794.4,342.8 800.1,350.1 805.9,352.5 811.7,353.1 817.5,353.2 823.3,353.3 829.1,353.3 834.8,353.3 840.6,353.3 846.4,353.3 852.2,353.3 858.0,353.3 863.8,353.3 869.5,353.3 875.3,353.4 881.1,353.6 886.9,353.8 892.7,354.0 898.5,354.2 904.2,354.4 910.0,354.6 915.8,354.7 921.6,354.7 927.4,354.7 933.2,354.7" fill="none" stroke="#0a800a" stroke-width="1.0" stroke-linejoin="round" stroke-linecap="square" opacity="1.0"/><polyline points="586.1,345.9 591.9,322.4 597.7,323.5 603.5,323.5 609.3,323.5 615.1,323.7 620.9,324.0 626.6,324.2 632.4,324.3 638.2,323.9 644.0,323.0 649.8,321.8 655.6,320.5 661.3,319.2 667.1,318.1 672.9,317.4 678.7,317.0 684.5,316.7 690.3,316.2 696.0,315.7 701.8,315.2 707.6,314.7 713.4,313.8 719.2,311.3 725.0,305.2 730.7,292.0 736.5,268.6 742.3,234.9 748.1,196.7 753.9,165.5 759.7,153.3 765.4,171.5 771.2,216.7 777.0,268.7 782.8,309.9 788.6,334.7 794.4,346.6 800.1,351.3 805.9,352.8 811.7,353.2 817.5,353.3 823.3,353.3 829.1,353.3 834.8,353.3 840.6,353.3 846.4,353.3 852.2,353.3 858.0,353.3 863.8,353.3 869.5,353.3 875.3,353.4 881.1,353.6 886.9,353.8 892.7,354.0 898.5,354.2 904.2,354.4 910.0,354.6 915.8,354.7 921.6,354.7 927.4,354.7 933.2,354.7" fill="none" stroke="#0a800a" stroke-width="1.0" stroke-linejoin="round" stroke-linecap="square" opacity="1.0"/><polyline points="586.1,340.6 591.9,324.2 597.7,324.5 603.5,324.5 609.3,324.5 615.1,324.5 620.9,324.6 626.6,324.7 632.4,324.7 638.2,324.7 644.0,324.1 649.8,322.6 655.6,320.5 661.3,318.2 667.1,315.9 672.9,314.1 678.7,313.2 684.5,313.1 690.3,313.2 696.0,313.3 701.8,313.5 707.6,313.6 713.4,313.2 719.2,311.3 725.0,306.1 730.7,294.4 736.5,273.5 742.3,242.7 748.1,206.6 753.9,175.2 759.7,159.8 765.4,170.8 771.2,210.9 777.0,261.6 782.8,304.5 788.6,331.6 794.4,345.2 800.1,350.8 805.9,352.6 811.7,353.1 817.5,353.2 823.3,353.3 829.1,353.3 834.8,353.3 840.6,353.3 846.4,353.3 852.2,353.3 858.0,353.3 863.8,353.3 869.5,353.3 875.3,353.4 881.1,353.6 886.9,353.8 892.7,354.0 898.5,354.2 904.2,354.4 910.0,354.6 915.8,354.7 921.6,354.7 927.4,354.7 933.2,354.7" fill="none" stroke="#0a800a" stroke-width="1.0" stroke-linejoin="round" stroke-linecap="square" opacity="1.0"/><polyline points="586.1,347.2 591.9,325.5 597.7,326.1 603.5,326.1 609.3,326.1 615.1,325.9 620.9,325.3 626.6,324.8 632.4,324.7 638.2,324.5 644.0,323.7 649.8,322.5 655.6,321.2 661.3,320.0 667.1,319.1 672.9,318.8 678.7,318.7 684.5,319.0 690.3,319.3 696.0,319.7 701.8,320.1 707.6,320.4 713.4,320.0 719.2,317.8 725.0,311.4 730.7,298.0 736.5,274.8 742.3,242.4 748.1,206.6 753.9,177.9 759.7,166.8 765.4,183.0 771.2,223.5 777.0,271.0 782.8,309.7 788.6,333.7 794.4,345.9 800.1,351.0 805.9,352.7 811.7,353.1 817.5,353.2 823.3,353.3 829.1,353.3 834.8,353.3 840.6,353.3 846.4,353.3 852.2,353.3 858.0,353.3 863.8,353.3 869.5,353.3 875.3,353.4 881.1,353.6 886.9,353.8 892.7,354.0 898.5,354.2 904.2,354.4 910.0,354.6 915.8,354.7 921.6,354.7 927.4,354.7 933.2,354.7" fill="none" stroke="#0a800a" stroke-width="1.0" stroke-linejoin="round" stroke-linecap="square" opacity="1.0"/><polyline points="586.1,341.7 591.9,327.2 597.7,327.7 603.5,327.7 609.3,327.7 615.1,327.9 620.9,328.5 626.6,329.1 632.4,329.3 638.2,329.0 644.0,327.9 649.8,326.3 655.6,324.5 661.3,322.8 667.1,321.3 672.9,320.4 678.7,320.3 684.5,320.5 690.3,320.5 696.0,320.4 701.8,320.0 707.6,319.4 713.4,318.1 719.2,315.4 725.0,309.5 730.7,298.0 736.5,278.4 742.3,250.5 748.1,218.4 753.9,190.6 759.7,176.9 765.4,186.1 771.2,220.2 777.0,264.5 782.8,303.6 788.6,329.7 794.4,343.7 800.1,350.1 805.9,352.4 811.7,353.1 817.5,353.2 823.3,353.3 829.1,353.3 834.8,353.3 840.6,353.3 846.4,353.3 852.2,353.3 858.0,353.3 863.8,353.3 869.5,353.3 875.3,353.4 881.1,353.6 886.9,353.8 892.7,354.0 898.5,354.2 904.2,354.4 910.0,354.6 915.8,354.7 921.6,354.7 927.4,354.7 933.2,354.7" fill="none" stroke="#0a800a" stroke-width="1.0" stroke-linejoin="round" stroke-linecap="square" opacity="1.0"/><polyline points="586.1,343.0 591.9,321.8 597.7,322.2 603.5,322.2 609.3,322.2 615.1,321.8 620.9,321.1 626.6,320.9 632.4,321.5 638.2,322.5 644.0,323.0 649.8,322.5 655.6,321.1 661.3,319.1 667.1,316.9 672.9,314.9 678.7,313.5 684.5,313.0 690.3,312.7 696.0,312.4 701.8,312.2 707.6,312.3 713.4,312.4 719.2,312.6 725.0,312.8 730.7,312.6 736.5,311.7 742.3,308.2 748.1,299.1 753.9,279.5 759.7,246.6 765.4,204.6 771.2,167.4 777.0,152.4 782.8,168.7 788.6,210.1 794.4,259.7 800.1,301.5 805.9,328.9 811.7,343.4 817.5,350.0 823.3,352.3 829.1,353.0 834.8,353.2 840.6,353.3 846.4,353.3 852.2,353.3 858.0,353.3 863.8,353.3 869.5,353.3 875.3,353.4 881.1,353.6 886.9,353.8 892.7,354.0 898.5,354.2 904.2,354.4 910.0,354.6 915.8,354.7 921.6,354.7 927.4,354.7 933.2,354.7" fill="none" stroke="#0a800a" stroke-width="1.0" stroke-linejoin="round" stroke-linecap="square" opacity="1.0"/><polyline points="586.1,342.4 591.9,321.6 597.7,322.8 603.5,322.8 609.3,322.8 615.1,322.8 620.9,322.6 626.6,322.5 632.4,322.5 638.2,322.6 644.0,322.7 649.8,322.2 655.6,321.0 661.3,319.5 667.1,317.9 672.9,316.5 678.7,315.4 684.5,315.3 690.3,315.2 696.0,315.2 701.8,315.1 707.6,315.0 713.4,314.9 719.2,314.9 725.0,315.0 730.7,315.0 736.5,314.3 742.3,311.4 748.1,303.0 753.9,284.3 759.7,252.3 765.4,211.0 771.2,174.2 777.0,159.3 782.8,174.6 788.6,213.6 794.4,260.7 800.1,301.1 805.9,328.0 811.7,342.8 817.5,349.6 823.3,352.2 829.1,353.0 834.8,353.2 840.6,353.3 846.4,353.3 852.2,353.3 858.0,353.3 863.8,353.3 869.5,353.3 875.3,353.4 881.1,353.6 886.9,353.8 892.7,354.0 898.5,354.2 904.2,354.4 910.0,354.6 915.8,354.7 921.6,354.7 927.4,354.7 933.2,354.7" fill="none" stroke="#0a800a" stroke-width="1.0" stroke-linejoin="round" stroke-linecap="square" opacity="1.0"/><polyline points="586.1,336.6 591.9,323.6 597.7,324.1 603.5,324.1 609.3,324.1 615.1,324.2 620.9,324.2 626.6,324.2 632.4,324.2 638.2,323.9 644.0,322.7 649.8,320.7 655.6,318.4 661.3,316.1 667.1,314.1 672.9,312.9 678.7,312.7 684.5,313.0 690.3,313.3 696.0,313.7 701.8,314.2 707.6,314.6 713.4,315.0 719.2,315.4 725.0,315.6 730.7,315.6 736.5,315.0 742.3,312.3 748.1,304.9 753.9,288.3 759.7,259.4 765.4,220.7 771.2,183.7 777.0,164.5 782.8,173.9 788.6,209.4 794.4,255.9 800.1,297.7 805.9,326.2 811.7,342.0 817.5,349.3 823.3,352.1 829.1,353.0 834.8,353.2 840.6,353.3 846.4,353.3 852.2,353.3 858.0,353.3 863.8,353.3 869.5,353.3 875.3,353.4 881.1,353.6 886.9,353.8 892.7,354.0 898.5,354.2 904.2,354.4 910.0,354.6 915.8,354.7 921.6,354.7 927.4,354.7 933.2,354.7" fill="none" stroke="#0a800a" stroke-width="1.0" stroke-linejoin="round" stroke-linecap="square" opacity="1.0"/><polyline points="586.1,343.9 591.9,323.9 597.7,325.1 603.5,325.1 609.3,325.1 615.1,324.9 620.9,324.2 626.6,323.3 632.4,322.7 638.2,321.9 644.0,320.8 649.8,319.8 655.6,318.8 661.3,318.2 667.1,318.1 672.9,318.5 678.7,318.8 684.5,319.1 690.3,319.2 696.0,319.3 701.8,319.3 707.6,319.3 713.4,319.3 719.2,319.5 725.0,319.6 730.7,319.6 736.5,318.9 742.3,315.7 748.1,306.9 753.9,288.2 759.7,257.0 765.4,217.8 771.2,183.6 777.0,169.9 782.8,184.1 788.6,220.5 794.4,264.8 800.1,302.9 805.9,328.6 811.7,342.9 817.5,349.6 823.3,352.2 829.1,353.0 834.8,353.2 840.6,353.3 846.4,353.3 852.2,353.3 858.0,353.3 863.8,353.3 869.5,353.3 875.3,353.4 881.1,353.6 886.9,353.8 892.7,354.0 898.5,354.2 904.2,354.4 910.0,354.6 915.8,354.7 921.6,354.7 927.4,354.7 933.2,354.7" fill="none" stroke="#0a800a" stroke-width="1.0" stroke-linejoin="round" stroke-linecap="square" opacity="1.0"/><polyline points="586.1,339.9 591.9,326.5 597.7,326.8 603.5,326.8 609.3,326.8 615.1,326.8 620.9,327.0 626.6,327.2 632.4,327.0 638.2,326.1 644.0,324.7 649.8,323.1 655.6,321.5 661.3,320.2 667.1,319.4 672.9,319.2 678.7,319.1 684.5,319.3 690.3,319.7 696.0,320.1 701.8,320.5 707.6,320.9 713.4,321.3 719.2,321.7 725.0,321.9 730.7,321.8 736.5,320.8 742.3,317.3 748.1,308.3 753.9,289.8 759.7,259.8 765.4,222.6 771.2,190.3 777.0,177.4 782.8,191.0 788.6,225.9 794.4,268.4 800.1,305.0 805.9,329.6 811.7,343.3 817.5,349.8 823.3,352.2 829.1,353.0 834.8,353.2 840.6,353.3 846.4,353.3 852.2,353.3 858.0,353.3 863.8,353.3 869.5,353.3 875.3,353.4 881.1,353.6 886.9,353.8 892.7,354.0 898.5,354.2 904.2,354.4 910.0,354.6 915.8,354.7 921.6,354.7 927.4,354.7 933.2,354.7" fill="none" stroke="#0a800a" stroke-width="1.0" stroke-linejoin="round" stroke-linecap="square" opacity="1.0"/><polyline points="586.1,342.3 591.9,328.6 597.7,328.7 603.5,328.7 609.3,328.7 615.1,328.8 620.9,329.2 626.6,329.8 632.4,330.0 638.2,329.2 644.0,327.7 649.8,325.8 655.6,323.7 661.3,321.8 667.1,320.5 672.9,319.9 678.7,319.5 684.5,319.4 690.3,319.5 696.0,319.6 701.8,319.9 707.6,320.2 713.4,320.6 719.2,320.8 725.0,321.0 730.7,320.7 736.5,319.3 742.3,314.9 748.1,304.6 753.9,284.8 759.7,255.0 765.4,220.7 771.2,194.0 777.0,186.9 782.8,204.1 788.6,239.0 794.4,278.6 800.1,311.3 805.9,332.8 811.7,344.7 817.5,350.2 823.3,352.4 829.1,353.0 834.8,353.2 840.6,353.3 846.4,353.3 852.2,353.3 858.0,353.3 863.8,353.3 869.5,353.3 875.3,353.4 881.1,353.6 886.9,353.8 892.7,354.0 898.5,354.2 904.2,354.4 910.0,354.6 915.8,354.7 921.6,354.7 927.4,354.7 933.2,354.7" fill="none" stroke="#0a800a" stroke-width="1.0" stroke-linejoin="round" stroke-linecap="square" opacity="1.0"/><polyline points="586.1,345.9 591.9,329.0 597.7,330.0 603.5,330.0 609.3,330.0 615.1,330.0 620.9,330.2 626.6,330.6 632.4,330.9 638.2,331.0 644.0,330.9 649.8,329.8 655.6,328.2 661.3,326.2 667.1,324.2 672.9,322.5 678.7,321.4 684.5,321.3 690.3,321.5 696.0,321.6 701.8,321.8 707.6,321.9 713.4,322.0 719.2,322.0 725.0,321.9 730.7,321.6 736.5,320.5 742.3,317.3 748.1,309.6 753.9,294.1 759.7,269.0 765.4,237.1 771.2,207.8 777.0,192.9 782.8,200.2 788.6,228.4 794.4,266.3 800.1,301.4 805.9,326.6 811.7,341.3 817.5,348.8 823.3,351.8 829.1,352.9 834.8,353.2 840.6,353.3 846.4,353.3 852.2,353.3 858.0,353.3 863.8,353.3 869.5,353.3 875.3,353.4 881.1,353.6 886.9,353.8 892.7,354.0 898.5,354.2 904.2,354.4 910.0,354.6 915.8,354.7 921.6,354.7 927.4,354.7 933.2,354.7" fill="none" stroke="#0a800a" stroke-width="1.0" stroke-linejoin="round" stroke-linecap="square" opacity="1.0"/><polyline points="586.1,341.5 591.9,332.4 597.7,332.6 603.5,332.6 609.3,332.6 615.1,332.4 620.9,332.1 626.6,331.7 632.4,331.6 638.2,331.0 644.0,330.2 649.8,329.2 655.6,328.2 661.3,327.4 667.1,326.9 672.9,326.9 678.7,326.9 684.5,326.9 690.3,326.9 696.0,326.8 701.8,326.7 707.6,326.6 713.4,326.6 719.2,327.0 725.0,327.9 730.7,329.1 736.5,330.3 742.3,331.2 748.1,330.7 753.9,327.2 759.7,318.2 765.4,301.4 771.2,275.9 777.0,244.9 782.8,216.0 788.6,199.2 794.4,203.3 800.1,234.1 805.9,276.6 811.7,313.4 817.5,336.3 823.3,347.2 829.1,351.5 834.8,352.9 840.6,353.2 846.4,353.3 852.2,353.3 858.0,353.3 863.8,353.3 869.5,353.3 875.3,353.4 881.1,353.6 886.9,353.8 892.7,354.0 898.5,354.2 904.2,354.4 910.0,354.6 915.8,354.7 921.6,354.7 927.4,354.7 933.2,354.7" fill="none" stroke="#0a800a" stroke-width="1.0" stroke-linejoin="round" stroke-linecap="square" opacity="1.0"/><polyline points="586.1,348.8 591.9,333.3 597.7,333.9 603.5,333.9 609.3,333.9 615.1,333.8 620.9,333.7 626.6,333.9 632.4,334.1 638.2,333.6 644.0,332.7 649.8,331.6 655.6,330.4 661.3,329.5 667.1,329.0 672.9,329.0 678.7,329.2 684.5,329.5 690.3,329.8 696.0,330.1 701.8,330.2 707.6,330.3 713.4,330.2 719.2,330.2 725.0,330.6 730.7,331.2 736.5,331.9 742.3,332.5 748.1,332.3 753.9,330.1 759.7,324.3 765.4,312.9 771.2,295.1 777.0,272.1 782.8,248.4 788.6,231.3 794.4,227.0 800.1,244.2 805.9,277.0 811.7,310.2 817.5,333.5 823.3,345.7 829.1,350.9 834.8,352.7 840.6,353.1 846.4,353.2 852.2,353.3 858.0,353.3 863.8,353.3 869.5,353.3 875.3,353.4 881.1,353.6 886.9,353.8 892.7,354.0 898.5,354.2 904.2,354.4 910.0,354.6 915.8,354.7 921.6,354.7 927.4,354.7 933.2,354.7" fill="none" stroke="#0a800a" stroke-width="1.0" stroke-linejoin="round" stroke-linecap="square" opacity="1.0"/><polyline points="586.1,346.8 591.9,335.3 597.7,335.8 603.5,335.8 609.3,335.8 615.1,335.8 620.9,335.7 626.6,335.8 632.4,336.0 638.2,336.1 644.0,336.1 649.8,335.7 655.6,335.0 661.3,334.0 667.1,332.9 672.9,332.0 678.7,331.5 684.5,331.4 690.3,331.7 696.0,332.0 701.8,332.1 707.6,332.1 713.4,332.0 719.2,332.0 725.0,332.4 730.7,333.0 736.5,333.7 742.3,334.2 748.1,333.8 753.9,331.3 759.7,324.9 765.4,313.1 771.2,295.1 777.0,272.8 782.8,251.3 788.6,237.2 794.4,236.5 800.1,255.9 805.9,287.1 811.7,316.7 817.5,336.6 823.3,346.9 829.1,351.2 834.8,352.8 840.6,353.2 846.4,353.3 852.2,353.3 858.0,353.3 863.8,353.3 869.5,353.3 875.3,353.4 881.1,353.6 886.9,353.8 892.7,354.0 898.5,354.2 904.2,354.4 910.0,354.6 915.8,354.7 921.6,354.7 927.4,354.7 933.2,354.7" fill="none" stroke="#0a800a" stroke-width="1.0" stroke-linejoin="round" stroke-linecap="square" opacity="1.0"/><polyline points="586.1,346.8 591.9,331.1 597.7,331.3 603.5,331.3 609.3,331.3 615.1,331.3 620.9,331.2 626.6,331.2 632.4,331.2 638.2,331.2 644.0,331.0 649.8,330.0 655.6,328.5 661.3,326.8 667.1,325.0 672.9,323.4 678.7,322.5 684.5,322.5 690.3,322.8 696.0,323.2 701.8,323.6 707.6,324.0 713.4,324.5 719.2,325.2 725.0,326.3 730.7,327.6 736.5,329.0 742.3,330.1 748.1,330.5 753.9,329.4 759.7,325.2 765.4,316.8 771.2,303.2 777.0,285.0 782.8,265.5 788.6,250.1 794.4,244.2 800.1,255.0 805.9,281.6 811.7,311.1 817.5,333.2 823.3,345.3 829.1,350.6 834.8,352.6 840.6,353.1 846.4,353.2 852.2,353.3 858.0,353.3 863.8,353.3 869.5,353.3 875.3,353.4 881.1,353.6 886.9,353.8 892.7,354.0 898.5,354.2 904.2,354.4 910.0,354.6 915.8,354.7 921.6,354.7 927.4,354.7 933.2,354.7" fill="none" stroke="#0a800a" stroke-width="1.0" stroke-linejoin="round" stroke-linecap="square" opacity="1.0"/><polyline points="586.1,345.7 591.9,334.8 597.7,335.2 603.5,335.2 609.3,335.2 615.1,335.3 620.9,335.6 626.6,336.0 632.4,336.1 638.2,336.0 644.0,335.7 649.8,334.7 655.6,333.1 661.3,331.3 667.1,329.4 672.9,327.7 678.7,326.7 684.5,326.5 690.3,326.8 696.0,327.2 701.8,327.8 707.6,328.4 713.4,329.3 719.2,330.7 725.0,332.3 730.7,334.0 736.5,335.8 742.3,337.5 748.1,339.0 753.9,340.2 759.7,341.1 765.4,341.3 771.2,340.8 777.0,339.3 782.8,335.7 788.6,328.2 794.4,315.7 800.1,298.4 805.9,279.5 811.7,264.5 817.5,258.7 823.3,266.8 829.1,287.3 834.8,311.3 840.6,330.9 846.4,343.1 852.2,349.3 858.0,352.0 863.8,352.9 869.5,353.2 875.3,353.4 881.1,353.6 886.9,353.8 892.7,354.0 898.5,354.2 904.2,354.4 910.0,354.6 915.8,354.7 921.6,354.7 927.4,354.7 933.2,354.7" fill="none" stroke="#0a800a" stroke-width="1.0" stroke-linejoin="round" stroke-linecap="square" opacity="1.0"/><polyline points="586.1,348.7 591.9,336.4 597.7,337.1 603.5,337.1 609.3,337.1 615.1,337.1 620.9,336.9 626.6,336.7 632.4,336.7 638.2,336.8 644.0,336.8 649.8,336.3 655.6,335.6 661.3,334.8 667.1,334.0 672.9,333.3 678.7,333.0 684.5,333.0 690.3,333.1 696.0,333.2 701.8,333.3 707.6,333.4 713.4,333.9 719.2,334.7 725.0,335.9 730.7,337.3 736.5,338.7 742.3,340.1 748.1,341.4 753.9,342.4 759.7,343.0 765.4,343.1 771.2,342.5 777.0,340.9 782.8,337.2 788.6,329.9 794.4,317.8 800.1,301.0 805.9,282.7 811.7,268.0 817.5,262.4 823.3,270.2 829.1,289.9 834.8,313.0 840.6,331.8 846.4,343.5 852.2,349.4 858.0,352.0 863.8,352.9 869.5,353.2 875.3,353.4 881.1,353.6 886.9,353.8 892.7,354.0 898.5,354.2 904.2,354.4 910.0,354.6 915.8,354.7 921.6,354.7 927.4,354.7 933.2,354.7" fill="none" stroke="#0a800a" stroke-width="1.0" stroke-linejoin="round" stroke-linecap="square" opacity="1.0"/><polyline points="586.1,349.8 591.9,339.3 597.7,339.8 603.5,339.8 609.3,339.8 615.1,339.8 620.9,340.0 626.6,340.2 632.4,340.2 638.2,339.7 644.0,338.8 649.8,337.7 655.6,336.5 661.3,335.6 667.1,334.9 672.9,334.6 678.7,334.5 684.5,334.4 690.3,334.5 696.0,334.6 701.8,334.8 707.6,335.0 713.4,335.4 719.2,336.3 725.0,337.4 730.7,338.7 736.5,340.0 742.3,341.3 748.1,342.5 753.9,343.6 759.7,344.2 765.4,344.5 771.2,344.2 777.0,343.3 782.8,340.9 788.6,335.8 794.4,327.0 800.1,314.7 805.9,301.0 811.7,290.0 817.5,285.8 823.3,291.6 829.1,306.3 834.8,323.6 840.6,337.5 846.4,346.1 852.2,350.4 858.0,352.4 863.8,353.0 869.5,353.3 875.3,353.4 881.1,353.6 886.9,353.8 892.7,354.0 898.5,354.2 904.2,354.4 910.0,354.6 915.8,354.7 921.6,354.7 927.4,354.7 933.2,354.7" fill="none" stroke="#0a800a" stroke-width="1.0" stroke-linejoin="round" stroke-linecap="square" opacity="1.0"/><polyline points="586.1,351.4 591.9,341.6 597.7,341.7 603.5,341.7 609.3,341.7 615.1,341.7 620.9,341.8 626.6,341.8 632.4,341.7 638.2,341.2 644.0,340.3 649.8,339.2 655.6,338.1 661.3,337.1 667.1,336.4 672.9,336.2 678.7,336.3 684.5,336.5 690.3,336.8 696.0,337.2 701.8,337.5 707.6,337.9 713.4,338.4 719.2,339.1 725.0,340.0 730.7,341.1 736.5,342.2 742.3,343.2 748.1,344.2 753.9,345.0 759.7,345.6 765.4,345.8 771.2,345.5 777.0,344.8 782.8,342.8 788.6,338.5 794.4,330.9 800.1,319.9 805.9,307.1 811.7,296.0 817.5,290.5 823.3,293.9 829.1,306.4 834.8,322.5 840.6,336.5 846.4,345.4 852.2,350.0 858.0,352.2 863.8,353.0 869.5,353.2 875.3,353.4 881.1,353.6 886.9,353.8 892.7,354.0 898.5,354.2 904.2,354.4 910.0,354.6 915.8,354.7 921.6,354.7 927.4,354.7 933.2,354.7" fill="none" stroke="#0a800a" stroke-width="1.0" stroke-linejoin="round" stroke-linecap="square" opacity="1.0"/><polyline points="586.1,351.6 591.9,344.2 597.7,344.3 603.5,344.3 609.3,344.3 615.1,344.3 620.9,344.3 626.6,344.5 632.4,344.6 638.2,344.6 644.0,344.4 649.8,344.0 655.6,343.4 661.3,342.7 667.1,342.1 672.9,341.7 678.7,341.5 684.5,341.5 690.3,341.5 696.0,341.5 701.8,341.6 707.6,341.7 713.4,341.9 719.2,342.4 725.0,343.1 730.7,343.9 736.5,344.8 742.3,345.7 748.1,346.5 753.9,347.1 759.7,347.6 765.4,347.8 771.2,347.7 777.0,347.4 782.8,346.3 788.6,343.6 794.4,338.6 800.1,331.1 805.9,322.7 811.7,316.2 817.5,314.6 823.3,319.5 829.1,329.2 834.8,339.4 840.6,346.6 846.4,350.4 852.2,352.2 858.0,353.0 863.8,353.2 869.5,353.3 875.3,353.4 881.1,353.6 886.9,353.8 892.7,354.0 898.5,354.2 904.2,354.4 910.0,354.6 915.8,354.7 921.6,354.7 927.4,354.7 933.2,354.7" fill="none" stroke="#0a800a" stroke-width="1.0" stroke-linejoin="round" stroke-linecap="square" opacity="1.0"/><polyline points="586.1,352.3 591.9,346.9 597.7,346.6 603.5,346.6 609.3,346.6 615.1,346.6 620.9,346.6 626.6,346.4 632.4,346.1 638.2,345.9 644.0,345.6 649.8,345.2 655.6,344.7 661.3,344.3 667.1,344.0 672.9,343.8 678.7,343.8 684.5,344.0 690.3,344.2 696.0,344.3 701.8,344.3 707.6,344.4 713.4,344.5 719.2,344.9 725.0,345.6 730.7,346.3 736.5,347.1 742.3,347.9 748.1,348.5 753.9,349.1 759.7,349.4 765.4,349.5 771.2,349.4 777.0,349.1 782.8,348.2 788.6,346.2 794.4,342.6 800.1,337.1 805.9,330.5 811.7,325.0 817.5,322.8 823.3,325.7 829.1,332.9 834.8,341.1 840.6,347.3 846.4,350.6 852.2,352.2 858.0,353.0 863.8,353.2 869.5,353.3 875.3,353.4 881.1,353.6 886.9,353.8 892.7,354.0 898.5,354.2 904.2,354.4 910.0,354.6 915.8,354.7 921.6,354.7 927.4,354.7 933.2,354.7" fill="none" stroke="#0a800a" stroke-width="1.0" stroke-linejoin="round" stroke-linecap="square" opacity="1.0"/><polyline points="586.1,344.9 591.9,325.4 597.7,325.4 603.5,325.4 609.3,325.4 615.1,325.4 620.9,325.4 626.6,325.4 632.4,325.4 638.2,325.0 644.0,323.8 649.8,322.1 655.6,320.3 661.3,318.6 667.1,317.3 672.9,316.7 678.7,316.7 684.5,316.9 690.3,317.0 696.0,317.2 701.8,317.4 707.6,317.5 713.4,317.7 719.2,317.6 725.0,316.6 730.7,313.1 736.5,304.2 742.3,287.1 748.1,263.1 753.9,240.6 759.7,231.2 765.4,236.1 771.2,249.8 777.0,269.2 782.8,290.4 788.6,310.0 794.4,325.8 800.1,337.2 805.9,344.7 811.7,349.2 817.5,351.6 823.3,352.8 829.1,353.4 834.8,353.6 840.6,353.7 846.4,353.7 852.2,353.7 858.0,353.7 863.8,353.7 869.5,353.8 875.3,353.8 881.1,353.9 886.9,354.1 892.7,354.2 898.5,354.4 904.2,354.5 910.0,354.6 915.8,354.7 921.6,354.7 927.4,354.7 933.2,354.7" fill="none" stroke="#0a800a" stroke-width="1.0" stroke-linejoin="round" stroke-linecap="square" opacity="1.0"/><polyline points="586.1,344.9 591.9,323.8 597.7,324.1 603.5,324.2 609.3,324.3 615.1,324.4 620.9,324.5 626.6,323.8 632.4,320.9 638.2,314.7 644.0,308.6 649.8,302.2 655.6,295.9 661.3,289.5 667.1,283.2 672.9,275.7 678.7,266.5 684.5,257.2 690.3,247.2 696.0,237.2 701.8,227.2 707.6,216.6 713.4,205.8 719.2,201.2 725.0,209.9 730.7,226.6 736.5,245.8 742.3,267.1 748.1,284.6 753.9,300.0 759.7,315.5 765.4,330.0 771.2,342.3 777.0,348.8 782.8,350.5 788.6,352.1 794.4,352.2 800.1,352.3 805.9,352.3 811.7,352.4 817.5,352.5 823.3,352.6 829.1,352.7 834.8,352.8 840.6,352.8 846.4,352.9 852.2,353.0 858.0,353.1 863.8,353.2 869.5,353.3 875.3,353.3 881.1,353.4 886.9,353.5 892.7,353.6 898.5,353.7 904.2,353.8 910.0,353.8 915.8,353.9 921.6,354.0 927.4,354.1 933.2,354.2" fill="none" stroke="#0a800a" stroke-width="1.0" stroke-linejoin="round" stroke-linecap="square" opacity="1.0"/><polyline points="586.1,346.9 591.9,328.7 597.7,329.0 603.5,329.1 609.3,329.1 615.1,329.1 620.9,329.2 626.6,329.2 632.4,328.5 638.2,326.8 644.0,323.5 649.8,318.0 655.6,312.6 661.3,306.4 667.1,299.4 672.9,297.4 678.7,299.6 684.5,305.7 690.3,313.5 696.0,322.0 701.8,331.5 707.6,339.8 713.4,345.6 719.2,349.2 725.0,351.3 730.7,352.0 736.5,352.2 742.3,352.5 748.1,352.7 753.9,352.8 759.7,352.4 765.4,352.1 771.2,351.8 777.0,351.4 782.8,351.1 788.6,350.8 794.4,348.2 800.1,345.6 805.9,337.8 811.7,330.0 817.5,324.1 823.3,328.7 829.1,336.8 834.8,343.8 840.6,349.1 846.4,351.6 852.2,353.4 858.0,353.5 863.8,353.5 869.5,353.6 875.3,353.6 881.1,353.7 886.9,353.7 892.7,353.8 898.5,353.8 904.2,353.9 910.0,354.0 915.8,354.0 921.6,354.1 927.4,354.1 933.2,354.2" fill="none" stroke="#0a800a" stroke-width="1.0" stroke-linejoin="round" stroke-linecap="square" opacity="1.0"/><polyline points="586.1,353.9 591.9,353.9 597.7,353.9 603.5,353.9 609.3,353.9 615.1,353.9 620.9,353.9 626.6,354.0 632.4,354.0 638.2,354.0 644.0,354.0 649.8,354.0 655.6,354.0 661.3,354.0 667.1,354.0 672.9,354.0 678.7,354.0 684.5,354.0 690.3,354.0 696.0,354.0 701.8,354.0 707.6,354.0 713.4,354.0 719.2,354.0 725.0,354.0 730.7,354.0 736.5,354.0 742.3,354.1 748.1,354.1 753.9,354.1 759.7,354.1 765.4,354.1 771.2,354.1 777.0,354.1 782.8,354.1 788.6,354.1 794.4,354.1 800.1,354.1 805.9,354.1 811.7,354.1 817.5,354.1 823.3,354.1 829.1,354.1 834.8,354.1 840.6,354.1 846.4,354.1 852.2,354.1 858.0,354.1 863.8,354.2 869.5,354.2 875.3,354.2 881.1,354.2 886.9,354.2 892.7,354.2 898.5,354.2 904.2,354.2 910.0,354.2 915.8,354.2 921.6,354.2 927.4,354.2 933.2,354.2" fill="none" stroke="#0a800a" stroke-width="1.0" stroke-linejoin="round" stroke-linecap="square" opacity="1.0"/><line x1="586" y1="274.8" x2="933.6" y2="274.8" stroke="#0a800a" stroke-width="2"/></g><rect x="568.5" y="131.5" width="382" height="228" fill="none" stroke="#000" stroke-width="1" shape-rendering="crispEdges"/><path d="M574.5 358V362M574.5 132V134M586.5 358V362M586.5 132V134M597.5 358V362M597.5 132V134M609.5 358V362M609.5 132V134M620.5 358V362M620.5 132V134M632.5 358V362M632.5 132V134M643.5 358V362M643.5 132V134M655.5 358V362M655.5 132V134M667.5 358V362M667.5 132V134M678.5 358V362M678.5 132V134M690.5 358V362M690.5 132V134M701.5 358V362M701.5 132V134M713.5 358V362M713.5 132V134M724.5 358V362M724.5 132V134M736.5 358V362M736.5 132V134M748.5 358V362M748.5 132V134M759.5 358V362M759.5 132V134M771.5 358V362M771.5 132V134M782.5 358V362M782.5 132V134M794.5 358V362M794.5 132V134M805.5 358V362M805.5 132V134M817.5 358V362M817.5 132V134M829.5 358V362M829.5 132V134M840.5 358V362M840.5 132V134M852.5 358V362M852.5 132V134M863.5 358V362M863.5 132V134M875.5 358V362M875.5 132V134M886.5 358V362M886.5 132V134M898.5 358V362M898.5 132V134M909.5 358V362M909.5 132V134M921.5 358V362M921.5 132V134M933.5 358V362M933.5 132V134M944.5 358V362M944.5 132V134M586.5 356V364M586.5 132V136M643.5 356V364M643.5 132V136M701.5 356V364M701.5 132V136M759.5 356V364M759.5 132V136M817.5 356V364M817.5 132V136M875.5 356V364M875.5 132V136M933.5 356V364M933.5 132V136M566 354.5H570M948 354.5H950M566 348.5H570M948 348.5H950M566 341.5H570M948 341.5H950M566 334.5H570M948 334.5H950M566 328.5H570M948 328.5H950M566 322.5H570M948 322.5H950M566 315.5H570M948 315.5H950M566 308.5H570M948 308.5H950M566 302.5H570M948 302.5H950M566 296.5H570M948 296.5H950M566 289.5H570M948 289.5H950M566 282.5H570M948 282.5H950M566 276.5H570M948 276.5H950M566 270.5H570M948 270.5H950M566 263.5H570M948 263.5H950M566 256.5H570M948 256.5H950M566 250.5H570M948 250.5H950M566 244.5H570M948 244.5H950M566 237.5H570M948 237.5H950M566 230.5H570M948 230.5H950M566 224.5H570M948 224.5H950M566 218.5H570M948 218.5H950M566 211.5H570M948 211.5H950M566 204.5H570M948 204.5H950M566 198.5H570M948 198.5H950M566 192.5H570M948 192.5H950M566 185.5H570M948 185.5H950M566 178.5H570M948 178.5H950M566 172.5H570M948 172.5H950M566 166.5H570M948 166.5H950M566 159.5H570M948 159.5H950M566 152.5H570M948 152.5H950M566 146.5H570M948 146.5H950M566 140.5H570M948 140.5H950M566 133.5H570M948 133.5H950M564 354.5H572M946 354.5H950M564 322.5H572M946 322.5H950M564 289.5H572M946 289.5H950M564 256.5H572M946 256.5H950M564 224.5H572M946 224.5H950M564 192.5H572M946 192.5H950M564 159.5H572M946 159.5H950" stroke="#000" stroke-width="1" fill="none" shape-rendering="crispEdges"/></svg>
<div class="t" style="top:340.5px;font-size:11px;left:-49px;width:100px;text-align:right">5</div>
<div class="t" style="top:292.5px;font-size:11px;left:-49px;width:100px;text-align:right">10</div>
<div class="t" style="top:245.5px;font-size:11px;left:-49px;width:100px;text-align:right">15</div>
<div class="t" style="top:197.5px;font-size:11px;left:-49px;width:100px;text-align:right">20</div>
<div class="t" style="top:149.5px;font-size:11px;left:-49px;width:100px;text-align:right">25</div>
<div class="t" style="top:366px;font-size:11px;left:-21.5px;width:200px;text-align:center">65</div>
<div class="t" style="top:366px;font-size:11px;left:38.5px;width:200px;text-align:center">70</div>
<div class="t" style="top:366px;font-size:11px;left:98.5px;width:200px;text-align:center">75</div>
<div class="t" style="top:366px;font-size:11px;left:158.5px;width:200px;text-align:center">80</div>
<div class="t" style="top:366px;font-size:11px;left:218.5px;width:200px;text-align:center">85</div>
<div class="t" style="top:366px;font-size:11px;left:278.5px;width:200px;text-align:center">90</div>
<div class="t" style="top:366px;font-size:11px;left:338.5px;width:200px;text-align:center">95</div>
<div class="t" style="top:345.5px;font-size:11px;left:458px;width:100px;text-align:right">0</div>
<div class="t" style="top:313.5px;font-size:11px;left:458px;width:100px;text-align:right">500</div>
<div class="t" style="top:280.5px;font-size:11px;left:458px;width:100px;text-align:right">1000</div>
<div class="t" style="top:247.5px;font-size:11px;left:458px;width:100px;text-align:right">1500</div>
<div class="t" style="top:215.5px;font-size:11px;left:458px;width:100px;text-align:right">2000</div>
<div class="t" style="top:183.5px;font-size:11px;left:458px;width:100px;text-align:right">2500</div>
<div class="t" style="top:150.5px;font-size:11px;left:458px;width:100px;text-align:right">3000</div>
<div class="t" style="top:366px;font-size:11px;left:485.5px;width:200px;text-align:center">65</div>
<div class="t" style="top:366px;font-size:11px;left:542.5px;width:200px;text-align:center">70</div>
<div class="t" style="top:366px;font-size:11px;left:600.5px;width:200px;text-align:center">75</div>
<div class="t" style="top:366px;font-size:11px;left:658.5px;width:200px;text-align:center">80</div>
<div class="t" style="top:366px;font-size:11px;left:716.5px;width:200px;text-align:center">85</div>
<div class="t" style="top:366px;font-size:11px;left:774.5px;width:200px;text-align:center">90</div>
<div class="t" style="top:366px;font-size:11px;left:832.5px;width:200px;text-align:center">95</div>
<div class="t" style="top:112.8px;font-size:9.7px;font-weight:700;left:142px;width:200px;text-align:center">Melt Curve</div>
<div class="t" style="top:112.8px;font-size:9.7px;font-weight:700;left:635.5px;width:200px;text-align:center">Melt Peak</div>
<div class="t" style="top:383px;font-size:11px;font-weight:700;left:159px;width:200px;text-align:center">Temperature, Celsius</div>
<div class="t" style="top:383px;font-size:11px;font-weight:700;left:659px;width:200px;text-align:center">Temperature, Celsius</div>
<div class="t" style="left:-5px;top:238px;width:60px;text-align:center;font-size:11px;font-weight:700;transform:rotate(-90deg)">RFU (10^3)</div>
<div class="t" style="left:491px;top:239px;width:60px;text-align:center;font-size:11px;font-weight:700;transform:rotate(-90deg)">-d(RFU)/dT</div>
<!-- panel icons -->
<svg class="a" style="left:476px;top:106px" width="17" height="18" viewBox="0 0 17 18"><rect x="0.6" y="2.2" width="9.8" height="12" rx=".8" fill="#dcc08a" stroke="#b5832a" stroke-width="1.1"/><rect x="2.2" y="3.8" width="6.6" height="9" fill="#e6d0a2"/><rect x="3.5" y="0.8" width="4" height="2.6" rx=".6" fill="#b0b4ba" stroke="#6e737c" stroke-width=".8"/><path d="M5.7 5.5H11.8L15 8.8V16.5H5.7Z" fill="#fcfdff" stroke="#8e949e" stroke-width=".9"/><path d="M11.8 5.5V8.8H15" fill="#e8ecf2" stroke="#8e949e" stroke-width=".8"/><path d="M7.5 10.5H13.2M7.5 12.5H13.2M7.5 14.5H13.2" stroke="#9ab4d4" stroke-width=".9"/></svg>
<svg class="a" style="left:476px;top:129px" width="17" height="17" viewBox="0 0 17 17"><rect x="10" y="4" width="5.2" height="8" fill="#8fd0ea" stroke="#4fa6cc" stroke-width=".7"/><rect x="0.4" y="7" width="4.8" height="9.2" fill="#7db728" stroke="#5a8f14" stroke-width=".7"/><rect x="5.4" y="0.8" width="4.6" height="15.4" fill="#dd5a44" stroke="#b23a28" stroke-width=".7"/><g transform="translate(11.3,11.6)"><path d="M-1 -5.2H1L1.4 -3.6L2.9 -4.4L4.4 -2.9L3.6 -1.4L5.2 -1V1L3.6 1.4L4.4 2.9L2.9 4.4L1.4 3.6L1 5.2H-1L-1.4 3.6L-2.9 4.4L-4.4 2.9L-3.6 1.4L-5.2 1V-1L-3.6 -1.4L-4.4 -2.9L-2.9 -4.4L-1.4 -3.6Z" fill="#e3cfa0" stroke="#b99a5e" stroke-width=".6"/><circle r="1.7" fill="#5b9ad8" stroke="#8a7a58" stroke-width=".5"/></g></svg>
<svg class="a" style="left:476px;top:154px" width="17" height="16" viewBox="0 0 17 16"><defs><linearGradient id="gw476" x1="0" y1="0" x2="0" y2="1"><stop offset="0" stop-color="#fdfdfd"/><stop offset="1" stop-color="#c4c4c8"/></linearGradient></defs><rect x="0.5" y="0.5" width="13.2" height="14" rx="1" fill="url(#gw476)" stroke="#4b5fa0" stroke-width="1"/><rect x="1" y="1" width="12.2" height="2.6" fill="#1c9cf0"/><path d="M5 13.5C4.5 9.5 7 7.6 10.6 7.6V4.6L16.3 8.3L10.6 12V9.6C8.4 9.6 6.4 10.4 5 13.5Z" fill="#1fd41f" stroke="#12a812" stroke-width=".6"/></svg>
<svg class="a" style="left:969px;top:106px" width="17" height="18" viewBox="0 0 17 18"><rect x="0.6" y="2.2" width="9.8" height="12" rx=".8" fill="#dcc08a" stroke="#b5832a" stroke-width="1.1"/><rect x="2.2" y="3.8" width="6.6" height="9" fill="#e6d0a2"/><rect x="3.5" y="0.8" width="4" height="2.6" rx=".6" fill="#b0b4ba" stroke="#6e737c" stroke-width=".8"/><path d="M5.7 5.5H11.8L15 8.8V16.5H5.7Z" fill="#fcfdff" stroke="#8e949e" stroke-width=".9"/><path d="M11.8 5.5V8.8H15" fill="#e8ecf2" stroke="#8e949e" stroke-width=".8"/><path d="M7.5 10.5H13.2M7.5 12.5H13.2M7.5 14.5H13.2" stroke="#9ab4d4" stroke-width=".9"/></svg>
<svg class="a" style="left:969px;top:129px" width="17" height="17" viewBox="0 0 17 17"><rect x="10" y="4" width="5.2" height="8" fill="#8fd0ea" stroke="#4fa6cc" stroke-width=".7"/><rect x="0.4" y="7" width="4.8" height="9.2" fill="#7db728" stroke="#5a8f14" stroke-width=".7"/><rect x="5.4" y="0.8" width="4.6" height="15.4" fill="#dd5a44" stroke="#b23a28" stroke-width=".7"/><g transform="translate(11.3,11.6)"><path d="M-1 -5.2H1L1.4 -3.6L2.9 -4.4L4.4 -2.9L3.6 -1.4L5.2 -1V1L3.6 1.4L4.4 2.9L2.9 4.4L1.4 3.6L1 5.2H-1L-1.4 3.6L-2.9 4.4L-4.4 2.9L-3.6 1.4L-5.2 1V-1L-3.6 -1.4L-4.4 -2.9L-2.9 -4.4L-1.4 -3.6Z" fill="#e3cfa0" stroke="#b99a5e" stroke-width=".6"/><circle r="1.7" fill="#5b9ad8" stroke="#8a7a58" stroke-width=".5"/></g></svg>
<svg class="a" style="left:969px;top:154px" width="17" height="16" viewBox="0 0 17 16"><defs><linearGradient id="gw969" x1="0" y1="0" x2="0" y2="1"><stop offset="0" stop-color="#fdfdfd"/><stop offset="1" stop-color="#c4c4c8"/></linearGradient></defs><rect x="0.5" y="0.5" width="13.2" height="14" rx="1" fill="url(#gw969)" stroke="#4b5fa0" stroke-width="1"/><rect x="1" y="1" width="12.2" height="2.6" fill="#1c9cf0"/><path d="M5 13.5C4.5 9.5 7 7.6 10.6 7.6V4.6L16.3 8.3L10.6 12V9.6C8.4 9.6 6.4 10.4 5 13.5Z" fill="#1fd41f" stroke="#12a812" stroke-width=".6"/></svg>

<!-- mid bar -->
<div class="a" style="left:14px;top:414px;width:13px;height:13px;background:#fff;border:1px solid #333"></div>
<svg class="a" style="left:14px;top:414px" width="13" height="13"><path d="M2.8 6.6L5.3 9.2L10.3 3.4" fill="none" stroke="#222" stroke-width="1.1"/></svg>
<div class="t" style="left:33px;top:414px;font-size:11.5px;letter-spacing:-0.7px">SYBR</div>
<div class="t" style="left:678px;top:417px;font-size:11px;letter-spacing:0px">Peak Type:</div>
<div class="combo" style="left:743px;top:413px;width:88px;height:21px"></div>
<div class="t" style="left:747px;top:417px;font-size:11px;letter-spacing:-0.15px">Positive</div>
<svg class="a" style="left:816px;top:421px" width="10" height="6"><path d="M0.5 0.5L5 5L9.5 0.5" fill="none" stroke="#333" stroke-width="1"/></svg>
<div class="t" style="left:847px;top:417px;font-size:11px;letter-spacing:-0.3px">Step Number:</div>
<div class="combo" style="left:922px;top:413px;width:66px;height:21px"></div>
<div class="t" style="left:926px;top:417px;font-size:11px">5</div>
<svg class="a" style="left:973px;top:421px" width="10" height="6"><path d="M0.5 0.5L5 5L9.5 0.5" fill="none" stroke="#333" stroke-width="1"/></svg>

<div class="sunk" style="left:9px;top:442px;width:588px;height:274px;background:#a0a0a0;border-color:#696969 #e3e3e3 #e3e3e3 #696969"></div>
<div class="a" style="left:11px;top:444px;width:584px;height:270px;border-style:solid;border-color:#a0a0a0 #f5f5f5 #f5f5f5 #a0a0a0;border-width:1px;background:#a0a0a0"></div>
<div class="a" style="left:13px;top:445px;width:35px;height:20px;background:#a9c4e9;border-right:1px solid #9bb7dc;border-bottom:1px solid #9bb7dc"></div>
<svg class="a" style="left:34px;top:451px" width="12" height="12"><path d="M11 0V11H0Z" fill="#dbe6f6"/></svg>
<div class="a" style="left:48px;top:445px;width:45px;height:20px;background:linear-gradient(#fafbfd,#e9eef7 55%,#d3dcec);border-right:1px solid #a9bfdc;border-bottom:1px solid #a9bfdc"></div>
<div class="t" style="left:47px;top:448px;width:45px;text-align:center;font-size:12px">1</div>
<div class="a" style="left:93px;top:445px;width:45px;height:20px;background:linear-gradient(#fafbfd,#e9eef7 55%,#d3dcec);border-right:1px solid #a9bfdc;border-bottom:1px solid #a9bfdc"></div>
<div class="t" style="left:92px;top:448px;width:45px;text-align:center;font-size:12px">2</div>
<div class="a" style="left:138px;top:445px;width:45px;height:20px;background:linear-gradient(#fafbfd,#e9eef7 55%,#d3dcec);border-right:1px solid #a9bfdc;border-bottom:1px solid #a9bfdc"></div>
<div class="t" style="left:137px;top:448px;width:45px;text-align:center;font-size:12px">3</div>
<div class="a" style="left:183px;top:445px;width:46px;height:20px;background:linear-gradient(#fafbfd,#e9eef7 55%,#d3dcec);border-right:1px solid #a9bfdc;border-bottom:1px solid #a9bfdc"></div>
<div class="t" style="left:182px;top:448px;width:46px;text-align:center;font-size:12px">4</div>
<div class="a" style="left:229px;top:445px;width:45px;height:20px;background:linear-gradient(#fafbfd,#e9eef7 55%,#d3dcec);border-right:1px solid #a9bfdc;border-bottom:1px solid #a9bfdc"></div>
<div class="t" style="left:228px;top:448px;width:45px;text-align:center;font-size:12px">5</div>
<div class="a" style="left:274px;top:445px;width:46px;height:20px;background:linear-gradient(#fafbfd,#e9eef7 55%,#d3dcec);border-right:1px solid #a9bfdc;border-bottom:1px solid #a9bfdc"></div>
<div class="t" style="left:273px;top:448px;width:46px;text-align:center;font-size:12px">6</div>
<div class="a" style="left:320px;top:445px;width:45px;height:20px;background:linear-gradient(#fafbfd,#e9eef7 55%,#d3dcec);border-right:1px solid #a9bfdc;border-bottom:1px solid #a9bfdc"></div>
<div class="t" style="left:319px;top:448px;width:45px;text-align:center;font-size:12px">7</div>
<div class="a" style="left:365px;top:445px;width:46px;height:20px;background:linear-gradient(#fafbfd,#e9eef7 55%,#d3dcec);border-right:1px solid #a9bfdc;border-bottom:1px solid #a9bfdc"></div>
<div class="t" style="left:364px;top:448px;width:46px;text-align:center;font-size:12px">8</div>
<div class="a" style="left:411px;top:445px;width:45px;height:20px;background:linear-gradient(#fafbfd,#e9eef7 55%,#d3dcec);border-right:1px solid #a9bfdc;border-bottom:1px solid #a9bfdc"></div>
<div class="t" style="left:410px;top:448px;width:45px;text-align:center;font-size:12px">9</div>
<div class="a" style="left:456px;top:445px;width:46px;height:20px;background:linear-gradient(#fafbfd,#e9eef7 55%,#d3dcec);border-right:1px solid #a9bfdc;border-bottom:1px solid #a9bfdc"></div>
<div class="t" style="left:455px;top:448px;width:46px;text-align:center;font-size:12px">10</div>
<div class="a" style="left:502px;top:445px;width:45px;height:20px;background:linear-gradient(#fafbfd,#e9eef7 55%,#d3dcec);border-right:1px solid #a9bfdc;border-bottom:1px solid #a9bfdc"></div>
<div class="t" style="left:501px;top:448px;width:45px;text-align:center;font-size:12px">11</div>
<div class="a" style="left:547px;top:445px;width:45px;height:20px;background:linear-gradient(#fafbfd,#e9eef7 55%,#d3dcec);border-right:1px solid #a9bfdc;border-bottom:1px solid #a9bfdc"></div>
<div class="t" style="left:546px;top:448px;width:45px;text-align:center;font-size:12px">12</div>
<div class="a" style="left:13px;top:465px;width:35px;height:31px;background:#e4ecf7;border-right:1px solid #a9bfdc;border-bottom:1px solid #a9bfdc"></div>
<div class="t" style="left:11.5px;top:474px;width:35px;text-align:center;font-size:12px">A</div>
<div class="a" style="left:48px;top:465px;width:45px;height:31px;background:#c4c4c4"></div>
<div class="a" style="left:48px;top:465px;width:44px;height:30px;background:#73aabc;border:1px solid #1f3238;box-shadow:inset 0 0 0 1px #3c5d67,inset 0 0 0 2px #699fb0"></div>
<div class="t" style="left:47px;top:474px;width:45px;text-align:center;font-size:13px;letter-spacing:-0.25px">Unk</div>
<div class="a" style="left:93px;top:465px;width:45px;height:31px;background:#c4c4c4"></div>
<div class="a" style="left:93px;top:465px;width:44px;height:30px;background:#73aabc;border:1px solid #1f3238;box-shadow:inset 0 0 0 1px #3c5d67,inset 0 0 0 2px #699fb0"></div>
<div class="t" style="left:92px;top:474px;width:45px;text-align:center;font-size:13px;letter-spacing:-0.25px">Unk</div>
<div class="a" style="left:138px;top:465px;width:45px;height:31px;background:#c4c4c4"></div>
<div class="a" style="left:138px;top:465px;width:44px;height:30px;background:#73aabc;border:1px solid #1f3238;box-shadow:inset 0 0 0 1px #3c5d67,inset 0 0 0 2px #699fb0"></div>
<div class="t" style="left:137px;top:474px;width:45px;text-align:center;font-size:13px;letter-spacing:-0.25px">Unk</div>
<div class="a" style="left:183px;top:465px;width:46px;height:31px;background:#c4c4c4"></div>
<div class="a" style="left:183px;top:465px;width:45px;height:30px;background:#73aabc;border:1px solid #1f3238;box-shadow:inset 0 0 0 1px #3c5d67,inset 0 0 0 2px #699fb0"></div>
<div class="t" style="left:182px;top:474px;width:46px;text-align:center;font-size:13px;letter-spacing:-0.25px">Unk</div>
<div class="a" style="left:229px;top:465px;width:45px;height:31px;background:#c4c4c4"></div>
<div class="a" style="left:229px;top:465px;width:44px;height:30px;background:#73aabc;border:1px solid #1f3238;box-shadow:inset 0 0 0 1px #3c5d67,inset 0 0 0 2px #699fb0"></div>
<div class="t" style="left:228px;top:474px;width:45px;text-align:center;font-size:13px;letter-spacing:-0.25px">Unk</div>
<div class="a" style="left:274px;top:465px;width:46px;height:31px;background:#c4c4c4"></div>
<div class="a" style="left:274px;top:465px;width:45px;height:30px;background:#73aabc;border:1px solid #1f3238;box-shadow:inset 0 0 0 1px #3c5d67,inset 0 0 0 2px #699fb0"></div>
<div class="t" style="left:273px;top:474px;width:46px;text-align:center;font-size:13px;letter-spacing:-0.25px">Unk</div>
<div class="a" style="left:320px;top:465px;width:45px;height:31px;background:#c4c4c4"></div>
<div class="a" style="left:320px;top:465px;width:44px;height:30px;background:#73aabc;border:1px solid #1f3238;box-shadow:inset 0 0 0 1px #3c5d67,inset 0 0 0 2px #699fb0"></div>
<div class="t" style="left:319px;top:474px;width:45px;text-align:center;font-size:13px;letter-spacing:-0.25px">Unk</div>
<div class="a" style="left:365px;top:465px;width:46px;height:31px;background:#c4c4c4"></div>
<div class="a" style="left:365px;top:465px;width:45px;height:30px;background:#73aabc;border:1px solid #1f3238;box-shadow:inset 0 0 0 1px #3c5d67,inset 0 0 0 2px #699fb0"></div>
<div class="t" style="left:364px;top:474px;width:46px;text-align:center;font-size:13px;letter-spacing:-0.25px">Unk</div>
<div class="a" style="left:411px;top:465px;width:45px;height:31px;background:#c4c4c4"></div>
<div class="a" style="left:411px;top:465px;width:44px;height:30px;background:#73aabc;border:1px solid #1f3238;box-shadow:inset 0 0 0 1px #3c5d67,inset 0 0 0 2px #699fb0"></div>
<div class="t" style="left:410px;top:474px;width:45px;text-align:center;font-size:13px;letter-spacing:-0.25px">Unk</div>
<div class="a" style="left:456px;top:465px;width:46px;height:31px;background:#c4c4c4"></div>
<div class="a" style="left:456px;top:465px;width:45px;height:30px;background:#73aabc;border:1px solid #1f3238;box-shadow:inset 0 0 0 1px #3c5d67,inset 0 0 0 2px #699fb0"></div>
<div class="t" style="left:455px;top:474px;width:46px;text-align:center;font-size:13px;letter-spacing:-0.25px">Unk</div>
<div class="a" style="left:502px;top:465px;width:45px;height:31px;background:#c4c4c4"></div>
<div class="a" style="left:502px;top:465px;width:44px;height:30px;background:#73aabc;border:1px solid #1f3238;box-shadow:inset 0 0 0 1px #3c5d67,inset 0 0 0 2px #699fb0"></div>
<div class="t" style="left:501px;top:474px;width:45px;text-align:center;font-size:13px;letter-spacing:-0.25px">Unk</div>
<div class="a" style="left:547px;top:465px;width:45px;height:31px;background:#c4c4c4"></div>
<div class="a" style="left:547px;top:465px;width:44px;height:30px;background:#73aabc;border:1px solid #1f3238;box-shadow:inset 0 0 0 1px #3c5d67,inset 0 0 0 2px #699fb0"></div>
<div class="t" style="left:546px;top:474px;width:45px;text-align:center;font-size:13px;letter-spacing:-0.25px">Unk</div>
<div class="a" style="left:13px;top:496px;width:35px;height:31px;background:#e4ecf7;border-right:1px solid #a9bfdc;border-bottom:1px solid #a9bfdc"></div>
<div class="t" style="left:11.5px;top:505px;width:35px;text-align:center;font-size:12px">B</div>
<div class="a" style="left:48px;top:496px;width:45px;height:31px;background:#c4c4c4"></div>
<div class="a" style="left:48px;top:496px;width:44px;height:30px;background:#73aabc;border:1px solid #1f3238;box-shadow:inset 0 0 0 1px #3c5d67,inset 0 0 0 2px #699fb0"></div>
<div class="t" style="left:47px;top:505px;width:45px;text-align:center;font-size:13px;letter-spacing:-0.25px">Unk</div>
<div class="a" style="left:93px;top:496px;width:45px;height:31px;background:#c4c4c4"></div>
<div class="a" style="left:93px;top:496px;width:44px;height:30px;background:#73aabc;border:1px solid #1f3238;box-shadow:inset 0 0 0 1px #3c5d67,inset 0 0 0 2px #699fb0"></div>
<div class="t" style="left:92px;top:505px;width:45px;text-align:center;font-size:13px;letter-spacing:-0.25px">Unk</div>
<div class="a" style="left:138px;top:496px;width:45px;height:31px;background:#c4c4c4"></div>
<div class="a" style="left:138px;top:496px;width:44px;height:30px;background:#73aabc;border:1px solid #1f3238;box-shadow:inset 0 0 0 1px #3c5d67,inset 0 0 0 2px #699fb0"></div>
<div class="t" style="left:137px;top:505px;width:45px;text-align:center;font-size:13px;letter-spacing:-0.25px">Unk</div>
<div class="a" style="left:183px;top:496px;width:46px;height:31px;background:#c4c4c4"></div>
<div class="a" style="left:183px;top:496px;width:45px;height:30px;background:#73aabc;border:1px solid #1f3238;box-shadow:inset 0 0 0 1px #3c5d67,inset 0 0 0 2px #699fb0"></div>
<div class="t" style="left:182px;top:505px;width:46px;text-align:center;font-size:13px;letter-spacing:-0.25px">Unk</div>
<div class="a" style="left:229px;top:496px;width:45px;height:31px;background:#c4c4c4"></div>
<div class="a" style="left:229px;top:496px;width:44px;height:30px;background:#73aabc;border:1px solid #1f3238;box-shadow:inset 0 0 0 1px #3c5d67,inset 0 0 0 2px #699fb0"></div>
<div class="t" style="left:228px;top:505px;width:45px;text-align:center;font-size:13px;letter-spacing:-0.25px">Unk</div>
<div class="a" style="left:274px;top:496px;width:46px;height:31px;background:#c4c4c4"></div>
<div class="a" style="left:274px;top:496px;width:45px;height:30px;background:#73aabc;border:1px solid #1f3238;box-shadow:inset 0 0 0 1px #3c5d67,inset 0 0 0 2px #699fb0"></div>
<div class="t" style="left:273px;top:505px;width:46px;text-align:center;font-size:13px;letter-spacing:-0.25px">Unk</div>
<div class="a" style="left:320px;top:496px;width:45px;height:31px;background:#c4c4c4"></div>
<div class="a" style="left:320px;top:496px;width:44px;height:30px;background:#73aabc;border:1px solid #1f3238;box-shadow:inset 0 0 0 1px #3c5d67,inset 0 0 0 2px #699fb0"></div>
<div class="t" style="left:319px;top:505px;width:45px;text-align:center;font-size:13px;letter-spacing:-0.25px">Unk</div>
<div class="a" style="left:365px;top:496px;width:46px;height:31px;background:#c4c4c4"></div>
<div class="a" style="left:365px;top:496px;width:45px;height:30px;background:#73aabc;border:1px solid #1f3238;box-shadow:inset 0 0 0 1px #3c5d67,inset 0 0 0 2px #699fb0"></div>
<div class="t" style="left:364px;top:505px;width:46px;text-align:center;font-size:13px;letter-spacing:-0.25px">Unk</div>
<div class="a" style="left:411px;top:496px;width:45px;height:31px;background:#c4c4c4"></div>
<div class="a" style="left:411px;top:496px;width:44px;height:30px;background:#73aabc;border:1px solid #1f3238;box-shadow:inset 0 0 0 1px #3c5d67,inset 0 0 0 2px #699fb0"></div>
<div class="t" style="left:410px;top:505px;width:45px;text-align:center;font-size:13px;letter-spacing:-0.25px">Unk</div>
<div class="a" style="left:456px;top:496px;width:46px;height:31px;background:#c4c4c4"></div>
<div class="a" style="left:456px;top:496px;width:45px;height:30px;background:#73aabc;border:1px solid #1f3238;box-shadow:inset 0 0 0 1px #3c5d67,inset 0 0 0 2px #699fb0"></div>
<div class="t" style="left:455px;top:505px;width:46px;text-align:center;font-size:13px;letter-spacing:-0.25px">Unk</div>
<div class="a" style="left:502px;top:496px;width:45px;height:31px;background:#c4c4c4"></div>
<div class="a" style="left:502px;top:496px;width:44px;height:30px;background:#73aabc;border:1px solid #1f3238;box-shadow:inset 0 0 0 1px #3c5d67,inset 0 0 0 2px #699fb0"></div>
<div class="t" style="left:501px;top:505px;width:45px;text-align:center;font-size:13px;letter-spacing:-0.25px">Unk</div>
<div class="a" style="left:547px;top:496px;width:45px;height:31px;background:#c4c4c4"></div>
<div class="a" style="left:547px;top:496px;width:44px;height:30px;background:#73aabc;border:1px solid #1f3238;box-shadow:inset 0 0 0 1px #3c5d67,inset 0 0 0 2px #699fb0"></div>
<div class="t" style="left:546px;top:505px;width:45px;text-align:center;font-size:13px;letter-spacing:-0.25px">Unk</div>
<div class="a" style="left:13px;top:527px;width:35px;height:31px;background:#e4ecf7;border-right:1px solid #a9bfdc;border-bottom:1px solid #a9bfdc"></div>
<div class="t" style="left:11.5px;top:536px;width:35px;text-align:center;font-size:12px">C</div>
<div class="a" style="left:48px;top:527px;width:45px;height:31px;background:#c4c4c4"></div>
<div class="a" style="left:48px;top:527px;width:44px;height:30px;background:#73aabc;border:1px solid #1f3238;box-shadow:inset 0 0 0 1px #3c5d67,inset 0 0 0 2px #699fb0"></div>
<div class="t" style="left:47px;top:536px;width:45px;text-align:center;font-size:13px;letter-spacing:-0.25px">NTC</div>
<div class="a" style="left:93px;top:527px;width:45px;height:31px;background:#c4c4c4"></div>
<div class="a" style="left:93px;top:527px;width:44px;height:30px;background:#73aabc;border:1px solid #1f3238;box-shadow:inset 0 0 0 1px #3c5d67,inset 0 0 0 2px #699fb0"></div>
<div class="t" style="left:92px;top:536px;width:45px;text-align:center;font-size:13px;letter-spacing:-0.25px">NTC</div>
<div class="a" style="left:138px;top:527px;width:45px;height:31px;background:#a0a0a0;border-right:1px solid #c4c4c4;border-bottom:1px solid #c4c4c4"></div>
<div class="a" style="left:183px;top:527px;width:46px;height:31px;background:#a0a0a0;border-right:1px solid #c4c4c4;border-bottom:1px solid #c4c4c4"></div>
<div class="a" style="left:229px;top:527px;width:45px;height:31px;background:#a0a0a0;border-right:1px solid #c4c4c4;border-bottom:1px solid #c4c4c4"></div>
<div class="a" style="left:274px;top:527px;width:46px;height:31px;background:#a0a0a0;border-right:1px solid #c4c4c4;border-bottom:1px solid #c4c4c4"></div>
<div class="a" style="left:320px;top:527px;width:45px;height:31px;background:#a0a0a0;border-right:1px solid #c4c4c4;border-bottom:1px solid #c4c4c4"></div>
<div class="a" style="left:365px;top:527px;width:46px;height:31px;background:#a0a0a0;border-right:1px solid #c4c4c4;border-bottom:1px solid #c4c4c4"></div>
<div class="a" style="left:411px;top:527px;width:45px;height:31px;background:#a0a0a0;border-right:1px solid #c4c4c4;border-bottom:1px solid #c4c4c4"></div>
<div class="a" style="left:456px;top:527px;width:46px;height:31px;background:#a0a0a0;border-right:1px solid #c4c4c4;border-bottom:1px solid #c4c4c4"></div>
<div class="a" style="left:502px;top:527px;width:45px;height:31px;background:#a0a0a0;border-right:1px solid #c4c4c4;border-bottom:1px solid #c4c4c4"></div>
<div class="a" style="left:547px;top:527px;width:45px;height:31px;background:#a0a0a0;border-right:1px solid #c4c4c4;border-bottom:1px solid #c4c4c4"></div>
<div class="a" style="left:13px;top:558px;width:35px;height:31px;background:#e4ecf7;border-right:1px solid #a9bfdc;border-bottom:1px solid #a9bfdc"></div>
<div class="t" style="left:11.5px;top:567px;width:35px;text-align:center;font-size:12px">D</div>
<div class="a" style="left:48px;top:558px;width:45px;height:31px;background:#a0a0a0;border-right:1px solid #c4c4c4;border-bottom:1px solid #c4c4c4"></div>
<div class="a" style="left:93px;top:558px;width:45px;height:31px;background:#a0a0a0;border-right:1px solid #c4c4c4;border-bottom:1px solid #c4c4c4"></div>
<div class="a" style="left:138px;top:558px;width:45px;height:31px;background:#a0a0a0;border-right:1px solid #c4c4c4;border-bottom:1px solid #c4c4c4"></div>
<div class="a" style="left:183px;top:558px;width:46px;height:31px;background:#a0a0a0;border-right:1px solid #c4c4c4;border-bottom:1px solid #c4c4c4"></div>
<div class="a" style="left:229px;top:558px;width:45px;height:31px;background:#a0a0a0;border-right:1px solid #c4c4c4;border-bottom:1px solid #c4c4c4"></div>
<div class="a" style="left:274px;top:558px;width:46px;height:31px;background:#a0a0a0;border-right:1px solid #c4c4c4;border-bottom:1px solid #c4c4c4"></div>
<div class="a" style="left:320px;top:558px;width:45px;height:31px;background:#a0a0a0;border-right:1px solid #c4c4c4;border-bottom:1px solid #c4c4c4"></div>
<div class="a" style="left:365px;top:558px;width:46px;height:31px;background:#a0a0a0;border-right:1px solid #c4c4c4;border-bottom:1px solid #c4c4c4"></div>
<div class="a" style="left:411px;top:558px;width:45px;height:31px;background:#a0a0a0;border-right:1px solid #c4c4c4;border-bottom:1px solid #c4c4c4"></div>
<div class="a" style="left:456px;top:558px;width:46px;height:31px;background:#a0a0a0;border-right:1px solid #c4c4c4;border-bottom:1px solid #c4c4c4"></div>
<div class="a" style="left:502px;top:558px;width:45px;height:31px;background:#a0a0a0;border-right:1px solid #c4c4c4;border-bottom:1px solid #c4c4c4"></div>
<div class="a" style="left:547px;top:558px;width:45px;height:31px;background:#a0a0a0;border-right:1px solid #c4c4c4;border-bottom:1px solid #c4c4c4"></div>
<div class="a" style="left:13px;top:589px;width:35px;height:31px;background:#e4ecf7;border-right:1px solid #a9bfdc;border-bottom:1px solid #a9bfdc"></div>
<div class="t" style="left:11.5px;top:598px;width:35px;text-align:center;font-size:12px">E</div>
<div class="a" style="left:48px;top:589px;width:45px;height:31px;background:#a0a0a0;border-right:1px solid #c4c4c4;border-bottom:1px solid #c4c4c4"></div>
<div class="a" style="left:93px;top:589px;width:45px;height:31px;background:#a0a0a0;border-right:1px solid #c4c4c4;border-bottom:1px solid #c4c4c4"></div>
<div class="a" style="left:138px;top:589px;width:45px;height:31px;background:#a0a0a0;border-right:1px solid #c4c4c4;border-bottom:1px solid #c4c4c4"></div>
<div class="a" style="left:183px;top:589px;width:46px;height:31px;background:#a0a0a0;border-right:1px solid #c4c4c4;border-bottom:1px solid #c4c4c4"></div>
<div class="a" style="left:229px;top:589px;width:45px;height:31px;background:#a0a0a0;border-right:1px solid #c4c4c4;border-bottom:1px solid #c4c4c4"></div>
<div class="a" style="left:274px;top:589px;width:46px;height:31px;background:#a0a0a0;border-right:1px solid #c4c4c4;border-bottom:1px solid #c4c4c4"></div>
<div class="a" style="left:320px;top:589px;width:45px;height:31px;background:#a0a0a0;border-right:1px solid #c4c4c4;border-bottom:1px solid #c4c4c4"></div>
<div class="a" style="left:365px;top:589px;width:46px;height:31px;background:#a0a0a0;border-right:1px solid #c4c4c4;border-bottom:1px solid #c4c4c4"></div>
<div class="a" style="left:411px;top:589px;width:45px;height:31px;background:#a0a0a0;border-right:1px solid #c4c4c4;border-bottom:1px solid #c4c4c4"></div>
<div class="a" style="left:456px;top:589px;width:46px;height:31px;background:#a0a0a0;border-right:1px solid #c4c4c4;border-bottom:1px solid #c4c4c4"></div>
<div class="a" style="left:502px;top:589px;width:45px;height:31px;background:#a0a0a0;border-right:1px solid #c4c4c4;border-bottom:1px solid #c4c4c4"></div>
<div class="a" style="left:547px;top:589px;width:45px;height:31px;background:#a0a0a0;border-right:1px solid #c4c4c4;border-bottom:1px solid #c4c4c4"></div>
<div class="a" style="left:13px;top:620px;width:35px;height:31px;background:#e4ecf7;border-right:1px solid #a9bfdc;border-bottom:1px solid #a9bfdc"></div>
<div class="t" style="left:11.5px;top:629px;width:35px;text-align:center;font-size:12px">F</div>
<div class="a" style="left:48px;top:620px;width:45px;height:31px;background:#a0a0a0;border-right:1px solid #c4c4c4;border-bottom:1px solid #c4c4c4"></div>
<div class="a" style="left:93px;top:620px;width:45px;height:31px;background:#a0a0a0;border-right:1px solid #c4c4c4;border-bottom:1px solid #c4c4c4"></div>
<div class="a" style="left:138px;top:620px;width:45px;height:31px;background:#a0a0a0;border-right:1px solid #c4c4c4;border-bottom:1px solid #c4c4c4"></div>
<div class="a" style="left:183px;top:620px;width:46px;height:31px;background:#a0a0a0;border-right:1px solid #c4c4c4;border-bottom:1px solid #c4c4c4"></div>
<div class="a" style="left:229px;top:620px;width:45px;height:31px;background:#a0a0a0;border-right:1px solid #c4c4c4;border-bottom:1px solid #c4c4c4"></div>
<div class="a" style="left:274px;top:620px;width:46px;height:31px;background:#a0a0a0;border-right:1px solid #c4c4c4;border-bottom:1px solid #c4c4c4"></div>
<div class="a" style="left:320px;top:620px;width:45px;height:31px;background:#a0a0a0;border-right:1px solid #c4c4c4;border-bottom:1px solid #c4c4c4"></div>
<div class="a" style="left:365px;top:620px;width:46px;height:31px;background:#a0a0a0;border-right:1px solid #c4c4c4;border-bottom:1px solid #c4c4c4"></div>
<div class="a" style="left:411px;top:620px;width:45px;height:31px;background:#a0a0a0;border-right:1px solid #c4c4c4;border-bottom:1px solid #c4c4c4"></div>
<div class="a" style="left:456px;top:620px;width:46px;height:31px;background:#a0a0a0;border-right:1px solid #c4c4c4;border-bottom:1px solid #c4c4c4"></div>
<div class="a" style="left:502px;top:620px;width:45px;height:31px;background:#a0a0a0;border-right:1px solid #c4c4c4;border-bottom:1px solid #c4c4c4"></div>
<div class="a" style="left:547px;top:620px;width:45px;height:31px;background:#a0a0a0;border-right:1px solid #c4c4c4;border-bottom:1px solid #c4c4c4"></div>
<div class="a" style="left:13px;top:651px;width:35px;height:30px;background:#e4ecf7;border-right:1px solid #a9bfdc;border-bottom:1px solid #a9bfdc"></div>
<div class="t" style="left:11.5px;top:660px;width:35px;text-align:center;font-size:12px">G</div>
<div class="a" style="left:48px;top:651px;width:45px;height:30px;background:#a0a0a0;border-right:1px solid #c4c4c4;border-bottom:1px solid #c4c4c4"></div>
<div class="a" style="left:93px;top:651px;width:45px;height:30px;background:#a0a0a0;border-right:1px solid #c4c4c4;border-bottom:1px solid #c4c4c4"></div>
<div class="a" style="left:138px;top:651px;width:45px;height:30px;background:#a0a0a0;border-right:1px solid #c4c4c4;border-bottom:1px solid #c4c4c4"></div>
<div class="a" style="left:183px;top:651px;width:46px;height:30px;background:#a0a0a0;border-right:1px solid #c4c4c4;border-bottom:1px solid #c4c4c4"></div>
<div class="a" style="left:229px;top:651px;width:45px;height:30px;background:#a0a0a0;border-right:1px solid #c4c4c4;border-bottom:1px solid #c4c4c4"></div>
<div class="a" style="left:274px;top:651px;width:46px;height:30px;background:#a0a0a0;border-right:1px solid #c4c4c4;border-bottom:1px solid #c4c4c4"></div>
<div class="a" style="left:320px;top:651px;width:45px;height:30px;background:#a0a0a0;border-right:1px solid #c4c4c4;border-bottom:1px solid #c4c4c4"></div>
<div class="a" style="left:365px;top:651px;width:46px;height:30px;background:#a0a0a0;border-right:1px solid #c4c4c4;border-bottom:1px solid #c4c4c4"></div>
<div class="a" style="left:411px;top:651px;width:45px;height:30px;background:#a0a0a0;border-right:1px solid #c4c4c4;border-bottom:1px solid #c4c4c4"></div>
<div class="a" style="left:456px;top:651px;width:46px;height:30px;background:#a0a0a0;border-right:1px solid #c4c4c4;border-bottom:1px solid #c4c4c4"></div>
<div class="a" style="left:502px;top:651px;width:45px;height:30px;background:#a0a0a0;border-right:1px solid #c4c4c4;border-bottom:1px solid #c4c4c4"></div>
<div class="a" style="left:547px;top:651px;width:45px;height:30px;background:#a0a0a0;border-right:1px solid #c4c4c4;border-bottom:1px solid #c4c4c4"></div>
<div class="a" style="left:13px;top:681px;width:35px;height:31px;background:#e4ecf7;border-right:1px solid #a9bfdc;border-bottom:1px solid #a9bfdc"></div>
<div class="t" style="left:11.5px;top:690px;width:35px;text-align:center;font-size:12px">H</div>
<div class="a" style="left:48px;top:681px;width:45px;height:31px;background:#a0a0a0;border-right:1px solid #c4c4c4;border-bottom:1px solid #c4c4c4"></div>
<div class="a" style="left:93px;top:681px;width:45px;height:31px;background:#a0a0a0;border-right:1px solid #c4c4c4;border-bottom:1px solid #c4c4c4"></div>
<div class="a" style="left:138px;top:681px;width:45px;height:31px;background:#a0a0a0;border-right:1px solid #c4c4c4;border-bottom:1px solid #c4c4c4"></div>
<div class="a" style="left:183px;top:681px;width:46px;height:31px;background:#a0a0a0;border-right:1px solid #c4c4c4;border-bottom:1px solid #c4c4c4"></div>
<div class="a" style="left:229px;top:681px;width:45px;height:31px;background:#a0a0a0;border-right:1px solid #c4c4c4;border-bottom:1px solid #c4c4c4"></div>
<div class="a" style="left:274px;top:681px;width:46px;height:31px;background:#a0a0a0;border-right:1px solid #c4c4c4;border-bottom:1px solid #c4c4c4"></div>
<div class="a" style="left:320px;top:681px;width:45px;height:31px;background:#a0a0a0;border-right:1px solid #c4c4c4;border-bottom:1px solid #c4c4c4"></div>
<div class="a" style="left:365px;top:681px;width:46px;height:31px;background:#a0a0a0;border-right:1px solid #c4c4c4;border-bottom:1px solid #c4c4c4"></div>
<div class="a" style="left:411px;top:681px;width:45px;height:31px;background:#a0a0a0;border-right:1px solid #c4c4c4;border-bottom:1px solid #c4c4c4"></div>
<div class="a" style="left:456px;top:681px;width:46px;height:31px;background:#a0a0a0;border-right:1px solid #c4c4c4;border-bottom:1px solid #c4c4c4"></div>
<div class="a" style="left:502px;top:681px;width:45px;height:31px;background:#a0a0a0;border-right:1px solid #c4c4c4;border-bottom:1px solid #c4c4c4"></div>
<div class="a" style="left:547px;top:681px;width:45px;height:31px;background:#a0a0a0;border-right:1px solid #c4c4c4;border-bottom:1px solid #c4c4c4"></div>
<div class="sunk" style="left:601px;top:442px;width:391px;height:274px;background:#d0d0d0"></div><div class="a" style="left:989px;top:444px;width:2px;height:271px;background:#f0f0f0"></div><div class="a" style="left:603px;top:713px;width:388px;height:2px;background:#f0f0f0"></div>
<div class="a" style="left:603px;top:444px;width:389px;height:1px;background:#a0a0a0"></div>
<div class="a" style="left:603px;top:445px;width:9px;height:32px;background:#a9c4e9;border-bottom:1px solid #9bb7dc"></div>
<div class="a" style="left:971px;top:445px;width:2px;height:252px;background:#c9d9ee"></div>
<div class="a" style="left:612px;top:445px;width:50px;height:32px;background:linear-gradient(#fdf2dd,#f9d9a0 60%,#f5bf64);border-right:1px solid #f29a36;border-bottom:1px solid #f29a36"></div>
<div class="a" style="left:662px;top:445px;width:60px;height:32px;background:linear-gradient(#fafbfd,#e9eef7 55%,#d3dcec);border-right:1px solid #a9bfdc;border-bottom:1px solid #a9bfdc"></div>
<div class="a" style="left:722px;top:445px;width:59px;height:32px;background:linear-gradient(#fafbfd,#e9eef7 55%,#d3dcec);border-right:1px solid #a9bfdc;border-bottom:1px solid #a9bfdc"></div>
<div class="a" style="left:781px;top:445px;width:71px;height:32px;background:linear-gradient(#fafbfd,#e9eef7 55%,#d3dcec);border-right:1px solid #a9bfdc;border-bottom:1px solid #a9bfdc"></div>
<div class="a" style="left:852px;top:445px;width:70px;height:32px;background:linear-gradient(#fafbfd,#e9eef7 55%,#d3dcec);border-right:1px solid #a9bfdc;border-bottom:1px solid #a9bfdc"></div>
<div class="a" style="left:922px;top:445px;width:50px;height:32px;background:linear-gradient(#fafbfd,#e9eef7 55%,#d3dcec);border-right:1px solid #a9bfdc;border-bottom:1px solid #a9bfdc"></div>
<div class="t" style="left:618.5px;top:454px;font-size:11px;letter-spacing:-0.35px">Well</div>
<div class="t" style="left:672px;top:454px;font-size:11px;letter-spacing:-0.35px">Fluor</div>
<div class="t" style="left:728.5px;top:454px;font-size:11px;letter-spacing:-0.35px">Target</div>
<div class="t" style="left:790px;top:454px;font-size:11px;letter-spacing:-0.35px">Content</div>
<div class="t" style="left:861.5px;top:454px;font-size:11px;letter-spacing:-0.35px">Sample</div>
<div class="t" style="left:908px;width:60px;text-align:center;top:448px;font-size:11px;letter-spacing:-0.35px;line-height:13px;height:26px">Melt
Temp</div>
<svg class="a" style="left:649px;top:454px" width="8" height="14"><path d="M4 1L7.3 7L4 13L0.7 7Z" fill="none" stroke="#222" stroke-width="1"/></svg>
<svg class="a" style="left:769px;top:454px" width="8" height="14"><path d="M4 1L7.3 7L4 13L0.7 7Z" fill="none" stroke="#222" stroke-width="1"/></svg>
<svg class="a" style="left:839px;top:454px" width="8" height="14"><path d="M4 1L7.3 7L4 13L0.7 7Z" fill="none" stroke="#222" stroke-width="1"/></svg>
<svg class="a" style="left:909px;top:454px" width="8" height="14"><path d="M4 1L7.3 7L4 13L0.7 7Z" fill="none" stroke="#222" stroke-width="1"/></svg>
<svg class="a" style="left:959px;top:454px" width="8" height="14"><path d="M4 1L7.3 7L4 13L0.7 7Z" fill="none" stroke="#222" stroke-width="1"/></svg>
<svg class="a" style="left:709px;top:456px" width="9" height="8"><path d="M4.5 1L8 7H1Z" fill="none" stroke="#333" stroke-width="1"/></svg>
<div class="a" style="left:603px;top:477px;width:9px;height:20px;background:#e4ecf7;border-bottom:1px solid #a9bfdc;border-right:1px solid #c5d4ea"></div>
<div class="a" style="left:612px;top:477px;width:50px;height:20px;background:#fff;border-right:1px solid #d0d0d0;border-bottom:1px solid #d0d0d0"></div>
<div class="t" style="left:614.5px;top:480px;font-size:11px;letter-spacing:-0.32px">B04</div>
<div class="a" style="left:662px;top:477px;width:60px;height:20px;background:#fff;border-right:1px solid #d0d0d0;border-bottom:1px solid #d0d0d0"></div>
<div class="t" style="left:664.3px;top:480px;font-size:11px;letter-spacing:-0.32px">SYBR</div>
<div class="a" style="left:722px;top:477px;width:59px;height:20px;background:#fff;border-right:1px solid #d0d0d0;border-bottom:1px solid #d0d0d0"></div>
<div class="a" style="left:781px;top:477px;width:71px;height:20px;background:#fff;border-right:1px solid #d0d0d0;border-bottom:1px solid #d0d0d0"></div>
<div class="t" style="left:784px;top:480px;font-size:11px;letter-spacing:-0.32px">Unkn</div>
<div class="a" style="left:852px;top:477px;width:70px;height:20px;background:#fff;border-right:1px solid #d0d0d0;border-bottom:1px solid #d0d0d0"></div>
<div class="t" style="left:853.5px;top:480px;font-size:11px;letter-spacing:-0.32px">bsk-0</div>
<div class="a" style="left:922px;top:477px;width:50px;height:20px;background:#fff;border-right:1px solid #d0d0d0;border-bottom:1px solid #d0d0d0"></div>
<div class="t" style="left:922px;top:480px;width:43px;text-align:right;font-size:11px;letter-spacing:-0.3px">None</div>
<div class="a" style="left:603px;top:497px;width:9px;height:20px;background:#e4ecf7;border-bottom:1px solid #a9bfdc;border-right:1px solid #c5d4ea"></div>
<div class="a" style="left:612px;top:497px;width:50px;height:20px;background:#fff;border-right:1px solid #d0d0d0;border-bottom:1px solid #d0d0d0"></div>
<div class="t" style="left:614.5px;top:500px;font-size:11px;letter-spacing:-0.32px">B05</div>
<div class="a" style="left:662px;top:497px;width:60px;height:20px;background:#fff;border-right:1px solid #d0d0d0;border-bottom:1px solid #d0d0d0"></div>
<div class="t" style="left:664.3px;top:500px;font-size:11px;letter-spacing:-0.32px">SYBR</div>
<div class="a" style="left:722px;top:497px;width:59px;height:20px;background:#fff;border-right:1px solid #d0d0d0;border-bottom:1px solid #d0d0d0"></div>
<div class="a" style="left:781px;top:497px;width:71px;height:20px;background:#fff;border-right:1px solid #d0d0d0;border-bottom:1px solid #d0d0d0"></div>
<div class="t" style="left:784px;top:500px;font-size:11px;letter-spacing:-0.32px">Unkn</div>
<div class="a" style="left:852px;top:497px;width:70px;height:20px;background:#fff;border-right:1px solid #d0d0d0;border-bottom:1px solid #d0d0d0"></div>
<div class="t" style="left:853.5px;top:500px;font-size:11px;letter-spacing:-0.32px">bsk-1</div>
<div class="a" style="left:922px;top:497px;width:50px;height:20px;background:#fff;border-right:1px solid #d0d0d0;border-bottom:1px solid #d0d0d0"></div>
<div class="t" style="left:922px;top:500px;width:43px;text-align:right;font-size:11px;letter-spacing:-0.3px">82.00</div>
<div class="a" style="left:603px;top:517px;width:9px;height:20px;background:#e4ecf7;border-bottom:1px solid #a9bfdc;border-right:1px solid #c5d4ea"></div>
<div class="a" style="left:612px;top:517px;width:50px;height:20px;background:#fff;border-right:1px solid #d0d0d0;border-bottom:1px solid #d0d0d0"></div>
<div class="t" style="left:614.5px;top:520px;font-size:11px;letter-spacing:-0.32px">B06</div>
<div class="a" style="left:662px;top:517px;width:60px;height:20px;background:#fff;border-right:1px solid #d0d0d0;border-bottom:1px solid #d0d0d0"></div>
<div class="t" style="left:664.3px;top:520px;font-size:11px;letter-spacing:-0.32px">SYBR</div>
<div class="a" style="left:722px;top:517px;width:59px;height:20px;background:#fff;border-right:1px solid #d0d0d0;border-bottom:1px solid #d0d0d0"></div>
<div class="a" style="left:781px;top:517px;width:71px;height:20px;background:#fff;border-right:1px solid #d0d0d0;border-bottom:1px solid #d0d0d0"></div>
<div class="t" style="left:784px;top:520px;font-size:11px;letter-spacing:-0.32px">Unkn</div>
<div class="a" style="left:852px;top:517px;width:70px;height:20px;background:#fff;border-right:1px solid #d0d0d0;border-bottom:1px solid #d0d0d0"></div>
<div class="t" style="left:853.5px;top:520px;font-size:11px;letter-spacing:-0.32px">bsk-1</div>
<div class="a" style="left:922px;top:517px;width:50px;height:20px;background:#fff;border-right:1px solid #d0d0d0;border-bottom:1px solid #d0d0d0"></div>
<div class="t" style="left:922px;top:520px;width:43px;text-align:right;font-size:11px;letter-spacing:-0.3px">81.50</div>
<div class="a" style="left:603px;top:537px;width:9px;height:20px;background:#e4ecf7;border-bottom:1px solid #a9bfdc;border-right:1px solid #c5d4ea"></div>
<div class="a" style="left:612px;top:537px;width:50px;height:20px;background:#fff;border-right:1px solid #d0d0d0;border-bottom:1px solid #d0d0d0"></div>
<div class="t" style="left:614.5px;top:540px;font-size:11px;letter-spacing:-0.32px">B07</div>
<div class="a" style="left:662px;top:537px;width:60px;height:20px;background:#fff;border-right:1px solid #d0d0d0;border-bottom:1px solid #d0d0d0"></div>
<div class="t" style="left:664.3px;top:540px;font-size:11px;letter-spacing:-0.32px">SYBR</div>
<div class="a" style="left:722px;top:537px;width:59px;height:20px;background:#fff;border-right:1px solid #d0d0d0;border-bottom:1px solid #d0d0d0"></div>
<div class="a" style="left:781px;top:537px;width:71px;height:20px;background:#fff;border-right:1px solid #d0d0d0;border-bottom:1px solid #d0d0d0"></div>
<div class="t" style="left:784px;top:540px;font-size:11px;letter-spacing:-0.32px">Unkn</div>
<div class="a" style="left:852px;top:537px;width:70px;height:20px;background:#fff;border-right:1px solid #d0d0d0;border-bottom:1px solid #d0d0d0"></div>
<div class="t" style="left:853.5px;top:540px;font-size:11px;letter-spacing:-0.32px">bsk-1</div>
<div class="a" style="left:922px;top:537px;width:50px;height:20px;background:#fff;border-right:1px solid #d0d0d0;border-bottom:1px solid #d0d0d0"></div>
<div class="t" style="left:922px;top:540px;width:43px;text-align:right;font-size:11px;letter-spacing:-0.3px">85.00</div>
<div class="a" style="left:603px;top:557px;width:9px;height:20px;background:#e4ecf7;border-bottom:1px solid #a9bfdc;border-right:1px solid #c5d4ea"></div>
<div class="a" style="left:612px;top:557px;width:50px;height:20px;background:#fff;border-right:1px solid #d0d0d0;border-bottom:1px solid #d0d0d0"></div>
<div class="t" style="left:614.5px;top:560px;font-size:11px;letter-spacing:-0.32px">B08</div>
<div class="a" style="left:662px;top:557px;width:60px;height:20px;background:#fff;border-right:1px solid #d0d0d0;border-bottom:1px solid #d0d0d0"></div>
<div class="t" style="left:664.3px;top:560px;font-size:11px;letter-spacing:-0.32px">SYBR</div>
<div class="a" style="left:722px;top:557px;width:59px;height:20px;background:#fff;border-right:1px solid #d0d0d0;border-bottom:1px solid #d0d0d0"></div>
<div class="a" style="left:781px;top:557px;width:71px;height:20px;background:#fff;border-right:1px solid #d0d0d0;border-bottom:1px solid #d0d0d0"></div>
<div class="t" style="left:784px;top:560px;font-size:11px;letter-spacing:-0.32px">Unkn</div>
<div class="a" style="left:852px;top:557px;width:70px;height:20px;background:#fff;border-right:1px solid #d0d0d0;border-bottom:1px solid #d0d0d0"></div>
<div class="t" style="left:853.5px;top:560px;font-size:11px;letter-spacing:-0.32px">bsk-1</div>
<div class="a" style="left:922px;top:557px;width:50px;height:20px;background:#fff;border-right:1px solid #d0d0d0;border-bottom:1px solid #d0d0d0"></div>
<div class="t" style="left:922px;top:560px;width:43px;text-align:right;font-size:11px;letter-spacing:-0.3px">85.00</div>
<div class="a" style="left:603px;top:577px;width:9px;height:20px;background:#e4ecf7;border-bottom:1px solid #a9bfdc;border-right:1px solid #c5d4ea"></div>
<div class="a" style="left:612px;top:577px;width:50px;height:20px;background:#fff;border-right:1px solid #d0d0d0;border-bottom:1px solid #d0d0d0"></div>
<div class="t" style="left:614.5px;top:580px;font-size:11px;letter-spacing:-0.32px">B09</div>
<div class="a" style="left:662px;top:577px;width:60px;height:20px;background:#fff;border-right:1px solid #d0d0d0;border-bottom:1px solid #d0d0d0"></div>
<div class="t" style="left:664.3px;top:580px;font-size:11px;letter-spacing:-0.32px">SYBR</div>
<div class="a" style="left:722px;top:577px;width:59px;height:20px;background:#fff;border-right:1px solid #d0d0d0;border-bottom:1px solid #d0d0d0"></div>
<div class="a" style="left:781px;top:577px;width:71px;height:20px;background:#fff;border-right:1px solid #d0d0d0;border-bottom:1px solid #d0d0d0"></div>
<div class="t" style="left:784px;top:580px;font-size:11px;letter-spacing:-0.32px">Unkn</div>
<div class="a" style="left:852px;top:577px;width:70px;height:20px;background:#fff;border-right:1px solid #d0d0d0;border-bottom:1px solid #d0d0d0"></div>
<div class="t" style="left:853.5px;top:580px;font-size:11px;letter-spacing:-0.32px">bsk-10</div>
<div class="a" style="left:922px;top:577px;width:50px;height:20px;background:#fff;border-right:1px solid #d0d0d0;border-bottom:1px solid #d0d0d0"></div>
<div class="t" style="left:922px;top:580px;width:43px;text-align:right;font-size:11px;letter-spacing:-0.3px">81.50</div>
<div class="a" style="left:603px;top:597px;width:9px;height:20px;background:#e4ecf7;border-bottom:1px solid #a9bfdc;border-right:1px solid #c5d4ea"></div>
<div class="a" style="left:612px;top:597px;width:50px;height:20px;background:#fff;border-right:1px solid #d0d0d0;border-bottom:1px solid #d0d0d0"></div>
<div class="t" style="left:614.5px;top:600px;font-size:11px;letter-spacing:-0.32px">B10</div>
<div class="a" style="left:662px;top:597px;width:60px;height:20px;background:#fff;border-right:1px solid #d0d0d0;border-bottom:1px solid #d0d0d0"></div>
<div class="t" style="left:664.3px;top:600px;font-size:11px;letter-spacing:-0.32px">SYBR</div>
<div class="a" style="left:722px;top:597px;width:59px;height:20px;background:#fff;border-right:1px solid #d0d0d0;border-bottom:1px solid #d0d0d0"></div>
<div class="a" style="left:781px;top:597px;width:71px;height:20px;background:#fff;border-right:1px solid #d0d0d0;border-bottom:1px solid #d0d0d0"></div>
<div class="t" style="left:784px;top:600px;font-size:11px;letter-spacing:-0.32px">Unkn</div>
<div class="a" style="left:852px;top:597px;width:70px;height:20px;background:#fff;border-right:1px solid #d0d0d0;border-bottom:1px solid #d0d0d0"></div>
<div class="t" style="left:853.5px;top:600px;font-size:11px;letter-spacing:-0.32px">bsk-10</div>
<div class="a" style="left:922px;top:597px;width:50px;height:20px;background:#fff;border-right:1px solid #d0d0d0;border-bottom:1px solid #d0d0d0"></div>
<div class="t" style="left:922px;top:600px;width:43px;text-align:right;font-size:11px;letter-spacing:-0.3px">81.50</div>
<div class="a" style="left:603px;top:617px;width:9px;height:20px;background:#e4ecf7;border-bottom:1px solid #a9bfdc;border-right:1px solid #c5d4ea"></div>
<div class="a" style="left:612px;top:617px;width:50px;height:20px;background:#fff;border-right:1px solid #d0d0d0;border-bottom:1px solid #d0d0d0"></div>
<div class="t" style="left:614.5px;top:620px;font-size:11px;letter-spacing:-0.32px">B11</div>
<div class="a" style="left:662px;top:617px;width:60px;height:20px;background:#fff;border-right:1px solid #d0d0d0;border-bottom:1px solid #d0d0d0"></div>
<div class="t" style="left:664.3px;top:620px;font-size:11px;letter-spacing:-0.32px">SYBR</div>
<div class="a" style="left:722px;top:617px;width:59px;height:20px;background:#fff;border-right:1px solid #d0d0d0;border-bottom:1px solid #d0d0d0"></div>
<div class="a" style="left:781px;top:617px;width:71px;height:20px;background:#fff;border-right:1px solid #d0d0d0;border-bottom:1px solid #d0d0d0"></div>
<div class="t" style="left:784px;top:620px;font-size:11px;letter-spacing:-0.32px">Unkn</div>
<div class="a" style="left:852px;top:617px;width:70px;height:20px;background:#fff;border-right:1px solid #d0d0d0;border-bottom:1px solid #d0d0d0"></div>
<div class="t" style="left:853.5px;top:620px;font-size:11px;letter-spacing:-0.32px">bsk-10</div>
<div class="a" style="left:922px;top:617px;width:50px;height:20px;background:#fff;border-right:1px solid #d0d0d0;border-bottom:1px solid #d0d0d0"></div>
<div class="t" style="left:922px;top:620px;width:43px;text-align:right;font-size:11px;letter-spacing:-0.3px">None</div>
<div class="a" style="left:603px;top:637px;width:9px;height:20px;background:#e4ecf7;border-bottom:1px solid #a9bfdc;border-right:1px solid #c5d4ea"></div>
<div class="a" style="left:612px;top:637px;width:50px;height:20px;background:#fff;border-right:1px solid #d0d0d0;border-bottom:1px solid #d0d0d0"></div>
<div class="t" style="left:614.5px;top:640px;font-size:11px;letter-spacing:-0.32px">B12</div>
<div class="a" style="left:662px;top:637px;width:60px;height:20px;background:#fff;border-right:1px solid #d0d0d0;border-bottom:1px solid #d0d0d0"></div>
<div class="t" style="left:664.3px;top:640px;font-size:11px;letter-spacing:-0.32px">SYBR</div>
<div class="a" style="left:722px;top:637px;width:59px;height:20px;background:#fff;border-right:1px solid #d0d0d0;border-bottom:1px solid #d0d0d0"></div>
<div class="a" style="left:781px;top:637px;width:71px;height:20px;background:#fff;border-right:1px solid #d0d0d0;border-bottom:1px solid #d0d0d0"></div>
<div class="t" style="left:784px;top:640px;font-size:11px;letter-spacing:-0.32px">Unkn</div>
<div class="a" style="left:852px;top:637px;width:70px;height:20px;background:#fff;border-right:1px solid #d0d0d0;border-bottom:1px solid #d0d0d0"></div>
<div class="t" style="left:853.5px;top:640px;font-size:11px;letter-spacing:-0.32px">bsk-10</div>
<div class="a" style="left:922px;top:637px;width:50px;height:20px;background:#fff;border-right:1px solid #d0d0d0;border-bottom:1px solid #d0d0d0"></div>
<div class="t" style="left:922px;top:640px;width:43px;text-align:right;font-size:11px;letter-spacing:-0.3px">None</div>
<div class="a" style="left:603px;top:657px;width:9px;height:20px;background:#e4ecf7;border-bottom:1px solid #a9bfdc;border-right:1px solid #c5d4ea"></div>
<div class="a" style="left:612px;top:657px;width:50px;height:20px;background:#fff;border-right:1px solid #d0d0d0;border-bottom:1px solid #d0d0d0"></div>
<div class="t" style="left:614.5px;top:660px;font-size:11px;letter-spacing:-0.32px">C01</div>
<div class="a" style="left:662px;top:657px;width:60px;height:20px;background:#fff;border-right:1px solid #d0d0d0;border-bottom:1px solid #d0d0d0"></div>
<div class="t" style="left:664.3px;top:660px;font-size:11px;letter-spacing:-0.32px">SYBR</div>
<div class="a" style="left:722px;top:657px;width:59px;height:20px;background:#fff;border-right:1px solid #d0d0d0;border-bottom:1px solid #d0d0d0"></div>
<div class="a" style="left:781px;top:657px;width:71px;height:20px;background:#fff;border-right:1px solid #d0d0d0;border-bottom:1px solid #d0d0d0"></div>
<div class="t" style="left:784px;top:660px;font-size:11px;letter-spacing:-0.32px">NTC</div>
<div class="a" style="left:852px;top:657px;width:70px;height:20px;background:#fff;border-right:1px solid #d0d0d0;border-bottom:1px solid #d0d0d0"></div>
<div class="t" style="left:853.5px;top:660px;font-size:11px;letter-spacing:-0.32px">rp-46</div>
<div class="a" style="left:922px;top:657px;width:50px;height:20px;background:#fff;border-right:1px solid #d0d0d0;border-bottom:1px solid #d0d0d0"></div>
<div class="t" style="left:922px;top:660px;width:43px;text-align:right;font-size:11px;letter-spacing:-0.3px">76.50</div>
<div class="a" style="left:603px;top:677px;width:9px;height:20px;background:#e4ecf7;border-bottom:1px solid #a9bfdc;border-right:1px solid #c5d4ea"></div>
<div class="a" style="left:612px;top:677px;width:50px;height:20px;background:#fff;border-right:1px solid #d0d0d0;border-bottom:1px solid #d0d0d0"></div>
<div class="t" style="left:614.5px;top:680px;font-size:11px;letter-spacing:-0.32px">C02</div>
<div class="a" style="left:662px;top:677px;width:60px;height:20px;background:#fff;border-right:1px solid #d0d0d0;border-bottom:1px solid #d0d0d0"></div>
<div class="t" style="left:664.3px;top:680px;font-size:11px;letter-spacing:-0.32px">SYBR</div>
<div class="a" style="left:722px;top:677px;width:59px;height:20px;background:#fff;border-right:1px solid #d0d0d0;border-bottom:1px solid #d0d0d0"></div>
<div class="a" style="left:781px;top:677px;width:71px;height:20px;background:#fff;border-right:1px solid #d0d0d0;border-bottom:1px solid #d0d0d0"></div>
<div class="t" style="left:784px;top:680px;font-size:11px;letter-spacing:-0.32px">NTC</div>
<div class="a" style="left:852px;top:677px;width:70px;height:20px;background:#fff;border-right:1px solid #d0d0d0;border-bottom:1px solid #d0d0d0"></div>
<div class="t" style="left:853.5px;top:680px;font-size:11px;letter-spacing:-0.32px">bsk</div>
<div class="a" style="left:922px;top:677px;width:50px;height:20px;background:#fff;border-right:1px solid #d0d0d0;border-bottom:1px solid #d0d0d0"></div>
<div class="t" style="left:922px;top:680px;width:43px;text-align:right;font-size:11px;letter-spacing:-0.3px">None</div>
<!-- scrollbar -->
<div class="a" style="left:973px;top:445px;width:16px;height:268px;background:#7a9cc6"></div>
<div class="a" style="left:974px;top:446px;width:14px;height:5px;background:#e6edf7;border:1px solid #fff"></div>
<div class="a" style="left:977px;top:448px;width:8px;height:1px;background:#5b78b0"></div>
<div class="a" style="left:973px;top:451px;width:16px;height:17px;background:linear-gradient(90deg,#f6f8fb 0,#e3e8f0 48%,#d0d7e4 50%,#b4c0d4 92%,#c6d0e0 100%);border:solid #50628f;border-width:1px 2px 1px 1px;box-shadow:inset 1px 1px 0 #fff"></div>
<svg class="a" style="left:975.5px;top:455px" width="10" height="7"><path d="M5 0.5L9.5 6H0.5Z" fill="#4d5878"/></svg>
<div class="a" style="left:973px;top:600px;width:16px;height:97px;background:linear-gradient(90deg,#f6f8fb 0,#e3e8f0 48%,#d0d7e4 50%,#b4c0d4 92%,#c6d0e0 100%);border:solid #50628f;border-width:1px 2px 1px 1px;box-shadow:inset 1px 1px 0 #fff"></div>
<div class="a" style="left:976.5px;top:644px;width:8px;height:7px;background:repeating-linear-gradient(#3d4864 0 1px,transparent 1px 2px)"></div>
<div class="a" style="left:973px;top:696px;width:16px;height:17px;background:linear-gradient(90deg,#f6f8fb 0,#e3e8f0 48%,#d0d7e4 50%,#b4c0d4 92%,#c6d0e0 100%);border:solid #50628f;border-width:1px 2px 1px 1px;box-shadow:inset 1px 1px 0 #fff"></div>
<svg class="a" style="left:975.5px;top:702px" width="10" height="7"><path d="M0.5 0.5H9.5L5 6Z" fill="#4d5878"/></svg>

<!-- status bar -->
<div class="a" style="left:5px;top:720px;width:992px;height:27px;background:#f5f5f5"></div>
<div class="a" style="left:995px;top:101px;width:2px;height:646px;background:#f4f4f4"></div>
<div class="sb" style="left:7px;width:68px"></div>
<div class="sbt" style="left:11.5px">Completed</div>
<div class="sb" style="left:81px;width:150px;background:#e6e6e6;border-color:#bcbcbc"></div>
<div class="sb" style="left:237px;width:141px"></div>
<div class="sbt" style="left:242px;letter-spacing:-0.18px">Scan Mode: All Channels</div>
<div class="sb" style="left:384px;width:113px"></div>
<div class="sbt" style="left:389px;letter-spacing:-0.5px">Plate Type: BR Clear</div>
<div class="sb" style="left:503px;width:252px"></div>
<div class="sbt" style="left:508.5px;letter-spacing:-0.25px">Baseline Setting: Baseline Subtracted Curve Fit</div>
<svg class="a" style="left:983px;top:733px" width="12" height="12"><g fill="#9a9a9a"><rect x="9" y="1" width="2" height="2"/><rect x="5" y="5" width="2" height="2"/><rect x="9" y="5" width="2" height="2"/><rect x="1" y="9" width="2" height="2"/><rect x="5" y="9" width="2" height="2"/><rect x="9" y="9" width="2" height="2"/></g></svg>

</body></html>
